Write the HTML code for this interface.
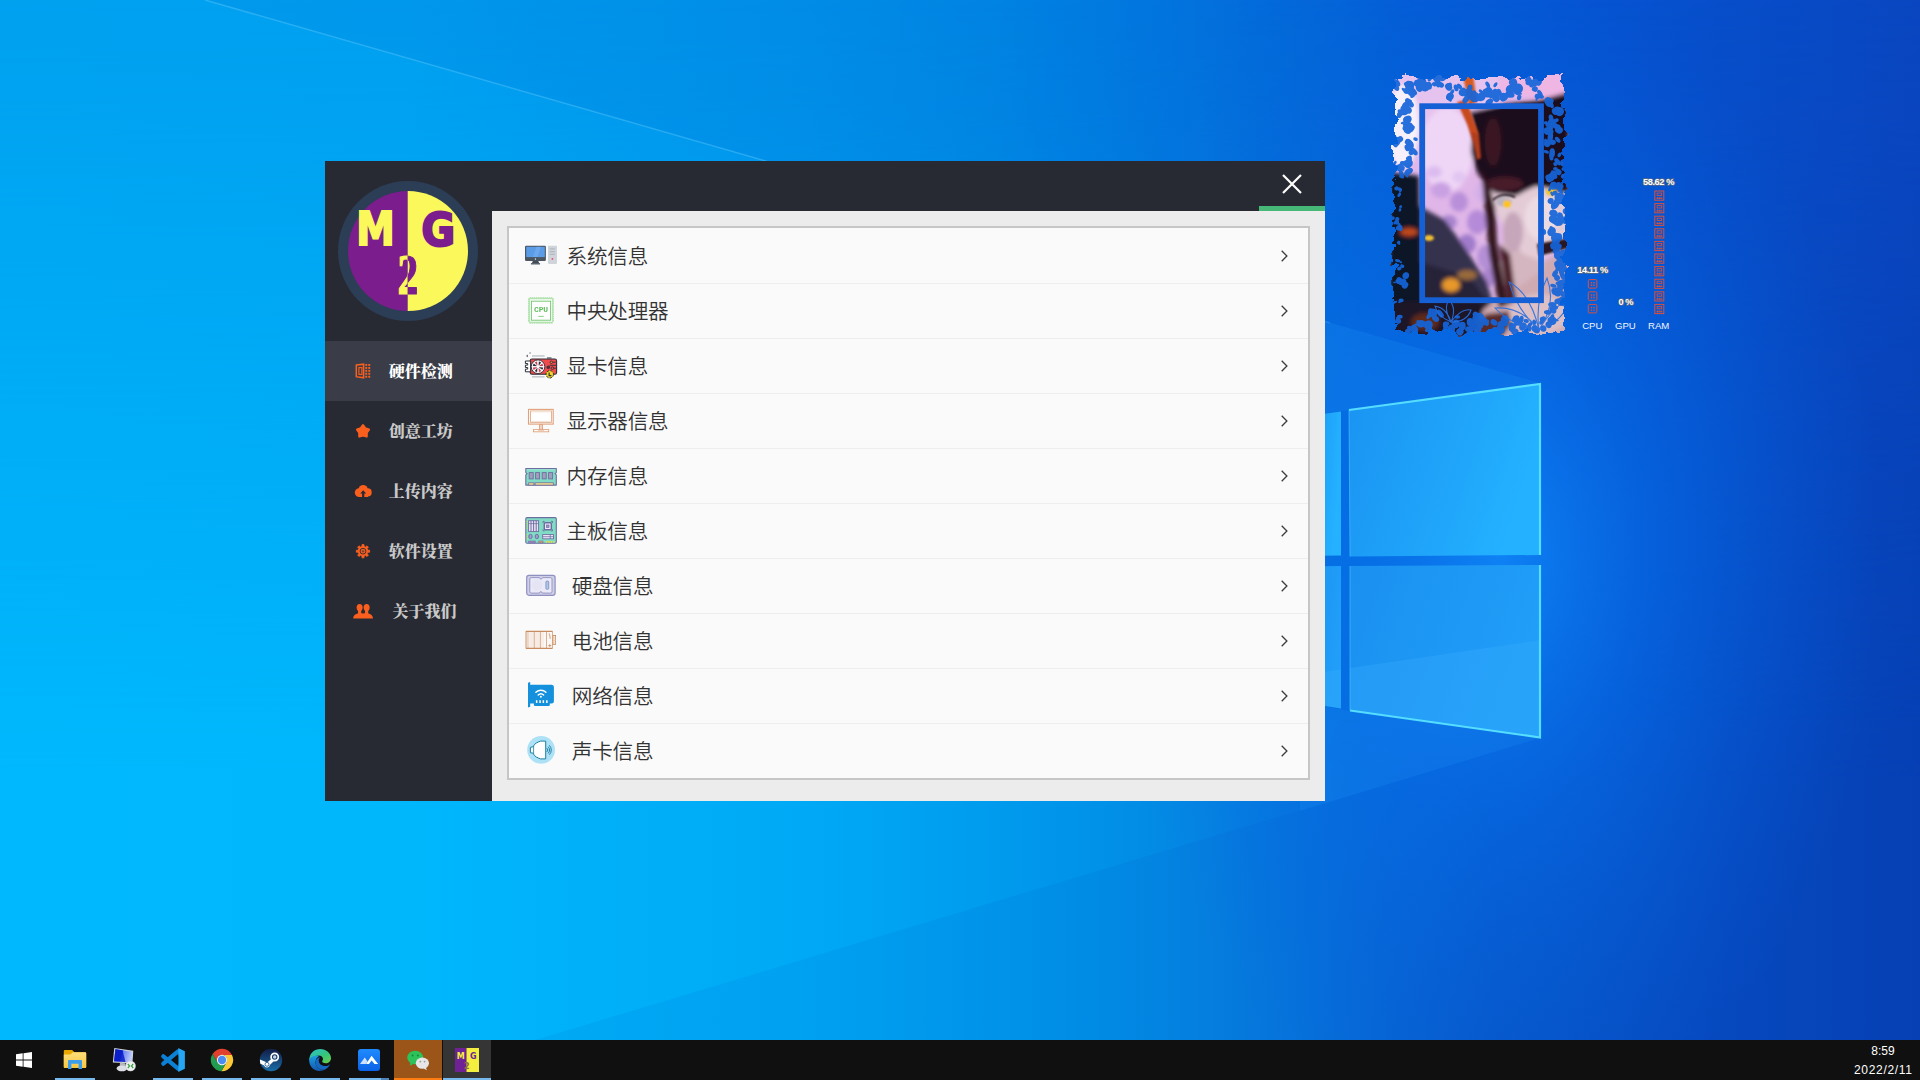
<!DOCTYPE html>
<html lang="zh-CN">
<head>
<meta charset="utf-8">
<title>MG2</title>
<style>
*{box-sizing:border-box;margin:0;padding:0}
html,body{width:1920px;height:1080px;overflow:hidden;background:#0078d7;font-family:"Liberation Sans","Noto Sans CJK SC",sans-serif}
#desk{position:absolute;left:0;top:0;width:1920px;height:1080px;overflow:hidden}
#wall{position:absolute;left:0;top:0;width:1920px;height:1040px}
/* app window */
#win{position:absolute;left:325px;top:161px;width:1000px;height:640px;background:#282a33}
#side{position:absolute;left:0;top:0;width:167px;height:640px;background:#282a33}
#logo{position:absolute;left:13px;top:20px;width:140px;height:140px}
.nav{position:absolute;left:0;width:167px;height:60px;color:#c9c9c9;font-family:"Liberation Serif","Noto Serif CJK SC",serif;font-weight:900;font-size:16px;line-height:61.6px}
.nav.on{background:#3a3d48;color:#fff}
.nav svg{position:absolute;left:26px;top:18px;width:24px;height:24px}
.nav span{position:absolute;left:63.7px;top:0;white-space:nowrap;letter-spacing:0}
#tbar{position:absolute;left:167px;top:0;width:833px;height:50px;background:#282a33}
#gbar{position:absolute;left:934px;top:45px;width:66px;height:5px;background:#47b877}
#close{position:absolute;left:956px;top:12px;width:22px;height:22px}
#main{position:absolute;left:167px;top:50px;width:833px;height:590px;background:#ececec}
#list{position:absolute;left:15px;top:15px;width:803px;height:554px;border:2px solid #c6c6c6;background:#fafafa;padding-top:1px;overflow:hidden}
.row{position:relative;height:55px;border-bottom:1px solid #eeeeee;font-size:20.6px;letter-spacing:-0.2px;line-height:55px;color:#333}
.row:last-child{border-bottom:none}
.row .ic{position:absolute;left:10px;top:7px;width:40px;height:40px}
.row .tx{position:absolute;left:57.5px;top:0px;white-space:nowrap;font-weight:350}
.row.w .tx{left:62.8px}
.row .ch{position:absolute;left:770px;top:18.7px;width:10px;height:16px}
/* taskbar */
#task{position:absolute;left:0;top:1040px;width:1920px;height:40px;background:#101010}
.tb{position:absolute;top:0;width:48px;height:40px}
.tb .ul{position:absolute;left:4px;right:4px;bottom:0;height:2px;background:#76b9ed;display:block}
.tb svg{position:absolute;left:12px;top:8px;width:24px;height:24px}
#clock{position:absolute;left:1843px;width:80px;top:2px;color:#fff;font-size:12px;line-height:19px;text-align:center}
</style>
</head>
<body>
<div id="desk">
<svg id="wall" viewBox="0 0 1920 1040" preserveAspectRatio="none">
<defs>
<linearGradient id="bgT" x1="0" y1="0" x2="1920" y2="0" gradientUnits="userSpaceOnUse">
<stop offset="0" stop-color="#00a2f0"/><stop offset="0.21" stop-color="#00a0f0"/><stop offset="0.42" stop-color="#0093eb"/><stop offset="0.52" stop-color="#0089e6"/><stop offset="0.625" stop-color="#0376e0"/><stop offset="0.73" stop-color="#0560d8"/><stop offset="0.83" stop-color="#0654d2"/><stop offset="0.92" stop-color="#084cc8"/><stop offset="1" stop-color="#0a46c0"/>
</linearGradient>
<linearGradient id="bgB" x1="0" y1="0" x2="1920" y2="0" gradientUnits="userSpaceOnUse">
<stop offset="0" stop-color="#00b8fd"/><stop offset="0.21" stop-color="#00b7fc"/><stop offset="0.42" stop-color="#00a9f5"/><stop offset="0.5" stop-color="#009eef"/><stop offset="0.57" stop-color="#0092e9"/><stop offset="0.63" stop-color="#0584e2"/><stop offset="0.68" stop-color="#0674dc"/><stop offset="0.73" stop-color="#0764d3"/><stop offset="0.78" stop-color="#0757c9"/><stop offset="0.9" stop-color="#0648be"/><stop offset="1" stop-color="#0640b4"/>
</linearGradient>
<linearGradient id="vm" x1="0" y1="0" x2="0" y2="1040" gradientUnits="userSpaceOnUse">
<stop offset="0" stop-color="#000"/><stop offset="0.1" stop-color="#161616"/><stop offset="0.75" stop-color="#fff"/><stop offset="1" stop-color="#fff"/>
</linearGradient>
<mask id="vmask"><rect width="1920" height="1040" fill="url(#vm)"/></mask>
<radialGradient id="glow" cx="1500" cy="560" r="380" gradientUnits="userSpaceOnUse" gradientTransform="translate(1500 560) scale(1 1.550) translate(-1500 -560)">
<stop offset="0" stop-color="#108cff" stop-opacity="0.8"/><stop offset="0.4" stop-color="#0672f0" stop-opacity="0.5"/><stop offset="1" stop-color="#0460e0" stop-opacity="0"/>
</radialGradient>
<linearGradient id="fadeR" x1="0" y1="0" x2="1920" y2="0" gradientUnits="userSpaceOnUse">
<stop offset="0" stop-color="#0030b0" stop-opacity="0.070"/><stop offset="0.65" stop-color="#0030b0" stop-opacity="0.070"/><stop offset="0.8" stop-color="#0030b0" stop-opacity="0"/><stop offset="1" stop-color="#0030b0" stop-opacity="0"/>
</linearGradient>
<linearGradient id="pane1" x1="0" y1="0" x2="1" y2="0.300"><stop offset="0" stop-color="#1a93f2"/><stop offset="0.700" stop-color="#20a7fb"/><stop offset="1" stop-color="#24b1ff"/></linearGradient>
<linearGradient id="pane2" x1="0" y1="0" x2="1" y2="0.300"><stop offset="0" stop-color="#1a90f0"/><stop offset="1" stop-color="#209ef8"/></linearGradient>
</defs>
<rect width="1920" height="1040" fill="url(#bgT)"/>
<rect width="1920" height="1040" fill="url(#bgB)" mask="url(#vmask)"/>
<!-- darker region above the upper beam edge -->
<polygon points="205,0 1920,0 1920,383 1540,383" fill="url(#fadeR)"/>
<line x1="205" y1="0" x2="1330" y2="323" stroke="#6fd0ff" stroke-width="1.5" opacity="0.35"/>
<!-- darker under lower beam edge -->
<polygon points="1540,738 535,1040 1920,1040 1920,738" fill="url(#fadeR)"/>
<rect width="1920" height="1040" fill="url(#glow)"/>
<!-- beam near window -->
<polygon points="1540,383 1300,314 1300,417 1349,410" fill="#1a8af0" opacity="0.280"/>
<polygon points="1540,738 1300,811 1300,702 1350,711" fill="#1a8af0" opacity="0.280"/>
<!-- panes -->
<polygon points="1349,410 1540.5,383.5 1540.5,555 1350,556.5" fill="url(#pane1)"/>
<polygon points="1350,566 1540.5,565 1540.5,738 1350,710.5" fill="url(#pane2)"/>
<polygon points="1300,417 1341,411.5 1341,555.5 1300,556" fill="url(#pane1)"/>
<polygon points="1300,566.5 1341,566 1341,708.5 1300,702" fill="url(#pane2)"/>
<polygon points="1350,668 1540.5,640 1540.5,738 1350,710.5" fill="#3aaeff" opacity="0.30"/><polygon points="1300,675 1341,669.500 1341,708.500 1300,702" fill="#3aaeff" opacity="0.30"/>
<polyline points="1349,410 1540,384 1540,555" fill="none" stroke="#58e2ff" stroke-width="2.200" opacity="0.950"/>
<polyline points="1540,565 1540,737.500 1350,710.500" fill="none" stroke="#58e2ff" stroke-width="2.200" opacity="0.950"/>
<polyline points="1350,556.5 1349,410" fill="none" stroke="#4fc8ff" stroke-width="1" opacity="0.6"/>
<polyline points="1350,710.5 1350,566" fill="none" stroke="#4fc8ff" stroke-width="1" opacity="0.6"/>
</svg>

<!--WIDGET-->
<svg id="wid" viewBox="0 0 180 266" style="position:absolute;left:1389px;top:72px;width:180px;height:266px;overflow:visible">
<defs>
<filter id="wb2" x="-5%" y="-5%" width="110%" height="110%"><feGaussianBlur stdDeviation="2"/></filter>
<filter id="wb4" x="-10%" y="-10%" width="120%" height="120%"><feGaussianBlur stdDeviation="4"/></filter>
<filter id="wb1" x="-5%" y="-5%" width="110%" height="110%"><feGaussianBlur stdDeviation="0.8"/></filter>
<filter id="torn" x="-10%" y="-10%" width="120%" height="120%"><feTurbulence type="fractalNoise" baseFrequency="0.09" numOctaves="3" seed="4" result="n"/><feDisplacementMap in="SourceGraphic" in2="n" scale="16" xChannelSelector="R" yChannelSelector="G"/></filter>
<mask id="tmask"><rect x="0" y="0" width="180" height="266" fill="#000"/><rect x="5" y="6" width="170" height="254" fill="#fff" filter="url(#torn)"/></mask>
<clipPath id="wclip"><rect x="0" y="0" width="180" height="266"/></clipPath>
</defs>
<g clip-path="url(#wclip)"><g mask="url(#tmask)">
<rect x="0" y="0" width="180" height="266" fill="#e0b6e8"/>
<g filter="url(#wb2)"><rect x="0" y="0" width="110" height="60" fill="#e6c2ee"/><ellipse cx="58" cy="78" rx="26" ry="42" fill="#efd6f6"/><ellipse cx="14" cy="55" rx="16" ry="42" fill="#f6f0fa"/><ellipse cx="150" cy="12" rx="40" ry="14" fill="#efb6e4"/><ellipse cx="52" cy="118" rx="10" ry="8" fill="#c9a0e2"/><ellipse cx="70" cy="130" rx="9" ry="10" fill="#b98fda"/><ellipse cx="88" cy="150" rx="10" ry="12" fill="#b58ad8"/><ellipse cx="60" cy="150" rx="8" ry="7" fill="#a884cf"/><ellipse cx="78" cy="172" rx="9" ry="10" fill="#a07ccb"/><ellipse cx="96" cy="185" rx="8" ry="12" fill="#b48fd6"/><ellipse cx="100" cy="205" rx="7" ry="10" fill="#a984cd"/><ellipse cx="45" cy="100" rx="8" ry="6" fill="#dcbcf0"/><ellipse cx="92" cy="120" rx="6" ry="10" fill="#d4b0ea"/><ellipse cx="70" cy="105" rx="7" ry="6" fill="#e2c6f2"/><polygon points="30,134 56,148 76,176 98,210 104,232 30,232" fill="#34304e"/><polygon points="30,190 80,205 100,232 30,232" fill="#262238"/><polygon points="0,100 30,104 32,266 0,266" fill="#0b1228"/><polygon points="0,228 104,232 92,266 0,266" fill="#1a1426"/><ellipse cx="62" cy="213" rx="9" ry="7" fill="#e8982c"/><ellipse cx="78" cy="203" rx="10" ry="5" fill="#9a6a3a"/><ellipse cx="20" cy="160" rx="9" ry="4" fill="#c2481a"/><ellipse cx="36" cy="250" rx="14" ry="9" fill="#5e2a1e"/><polygon points="86,266 94,238 120,216 150,192 180,176 180,266" fill="#cfaab2"/><polygon points="82,266 96,242 132,238 112,266" fill="#5a2c2c"/><ellipse cx="150" cy="242" rx="30" ry="20" fill="#dcc0c6"/><polygon points="116,158 150,184 156,196 122,220 110,205" fill="#d4b6c0"/><polygon points="100,116 106,121 127,124 138,118 147,114 158,116 175,121 180,122 180,172 166,178 150,188 134,182 120,162 108,142" fill="#e4ccd6"/><ellipse cx="152" cy="146" rx="16" ry="22" fill="#eddbe3"/><ellipse cx="124" cy="160" rx="10" ry="20" fill="#c6a6ba"/><polygon points="80,40 98,36 116,32 150,28 180,20 180,122 170,120 158,116 147,114 138,118 127,124 106,121 96,113 88,100 82,80 84,58" fill="#1b0e1e"/><polygon points="92,96 100,112 106,135 108,172 119,232 110,236 100,182 96,140" fill="#30121e"/><polygon points="110,172 119,232 127,228 121,182" fill="#4a1a26"/><ellipse cx="116" cy="112" rx="18" ry="7" fill="#4a1c2a"/><ellipse cx="104" cy="70" rx="8" ry="24" fill="#3a1622"/></g>
<g filter="url(#wb1)">
<polygon points="68,30 77,28 90,62 84,70 78,52" fill="#c8481e"/>
<polygon points="74,4 84,2 88,30 80,34" fill="#d65a22"/>
<polygon points="82,60 90,62 92,86 88,88" fill="#b03c1c"/>
<ellipse cx="115" cy="130" rx="8" ry="4.500" fill="#b9b4c0"/>
<ellipse cx="118" cy="132" rx="4" ry="3.400" fill="#ffc31c"/>
<path d="M104 128q10-8 22-3" stroke="#1a0c16" stroke-width="2" fill="none"/>
<ellipse cx="162" cy="120" rx="5" ry="3.400" fill="#f2c420"/>
<path d="M150 113q8-6 18-3" stroke="#1a0c16" stroke-width="1.600" fill="none"/>
<polygon points="148,172 180,166 180,176 150,184" fill="#2a1820"/>
<ellipse cx="40" cy="166" rx="5" ry="3" fill="#f0c030"/>
</g>
<g fill="#1565da" opacity="0.92"><ellipse cx="6.2" cy="10.2" rx="3.9" ry="2.7" transform="rotate(14 6.6 10.7)"/><ellipse cx="8.2" cy="9.7" rx="2.5" ry="1.8" transform="rotate(61 6.6 10.7)"/><ellipse cx="9.8" cy="12.8" rx="4.9" ry="2.7" transform="rotate(57 6.6 10.7)"/><ellipse cx="3.0" cy="6.9" rx="2.4" ry="1.9" transform="rotate(12 6.6 10.7)"/><ellipse cx="7.0" cy="10.7" rx="5.0" ry="3.2" transform="rotate(36 6.6 10.7)"/><ellipse cx="13.6" cy="16.0" rx="2.6" ry="2.0" transform="rotate(48 19.3 18.3)"/><ellipse cx="15.9" cy="21.8" rx="2.4" ry="1.3" transform="rotate(52 19.3 18.3)"/><ellipse cx="14.5" cy="18.4" rx="4.7" ry="3.4" transform="rotate(116 19.3 18.3)"/><ellipse cx="17.9" cy="20.0" rx="2.8" ry="2.5" transform="rotate(20 19.3 18.3)"/><ellipse cx="15.1" cy="16.1" rx="5.0" ry="4.3" transform="rotate(73 19.3 18.3)"/><ellipse cx="29.4" cy="9.2" rx="3.3" ry="3.2" transform="rotate(107 30.9 9.3)"/><ellipse cx="36.7" cy="10.8" rx="4.7" ry="3.7" transform="rotate(80 30.9 9.3)"/><ellipse cx="29.2" cy="12.0" rx="3.8" ry="3.4" transform="rotate(17 30.9 9.3)"/><ellipse cx="35.4" cy="2.1" rx="3.7" ry="3.1" transform="rotate(15 30.9 9.3)"/><ellipse cx="30.5" cy="6.6" rx="4.1" ry="3.4" transform="rotate(114 30.9 9.3)"/><ellipse cx="39.2" cy="14.8" rx="3.7" ry="2.2" transform="rotate(29 39.3 14.9)"/><ellipse cx="37.3" cy="15.0" rx="3.2" ry="2.7" transform="rotate(101 39.3 14.9)"/><ellipse cx="33.2" cy="19.9" rx="2.5" ry="1.8" transform="rotate(140 39.3 14.9)"/><ellipse cx="39.1" cy="16.2" rx="3.6" ry="2.8" transform="rotate(180 39.3 14.9)"/><ellipse cx="36.5" cy="16.6" rx="5.0" ry="4.9" transform="rotate(38 39.3 14.9)"/><ellipse cx="48.6" cy="10.6" rx="4.9" ry="2.9" transform="rotate(72 48.7 10.7)"/><ellipse cx="52.4" cy="10.8" rx="3.4" ry="2.7" transform="rotate(32 48.7 10.7)"/><ellipse cx="47.0" cy="6.4" rx="4.2" ry="3.5" transform="rotate(13 48.7 10.7)"/><ellipse cx="41.1" cy="12.8" rx="5.2" ry="4.4" transform="rotate(143 48.7 10.7)"/><ellipse cx="45.9" cy="13.0" rx="2.6" ry="2.1" transform="rotate(15 48.7 10.7)"/><ellipse cx="59.6" cy="26.1" rx="4.1" ry="2.3" transform="rotate(145 60.5 25.7)"/><ellipse cx="61.1" cy="26.5" rx="3.4" ry="1.7" transform="rotate(53 60.5 25.7)"/><ellipse cx="59.5" cy="24.8" rx="3.0" ry="2.1" transform="rotate(93 60.5 25.7)"/><ellipse cx="59.5" cy="25.9" rx="3.8" ry="3.7" transform="rotate(122 60.5 25.7)"/><ellipse cx="59.8" cy="25.8" rx="2.6" ry="1.7" transform="rotate(67 60.5 25.7)"/><ellipse cx="72.0" cy="20.3" rx="5.2" ry="3.6" transform="rotate(176 73.8 20.5)"/><ellipse cx="73.6" cy="20.4" rx="3.9" ry="3.9" transform="rotate(23 73.8 20.5)"/><ellipse cx="73.0" cy="18.2" rx="3.4" ry="2.0" transform="rotate(57 73.8 20.5)"/><ellipse cx="67.0" cy="19.0" rx="3.3" ry="2.0" transform="rotate(49 73.8 20.5)"/><ellipse cx="76.4" cy="13.5" rx="4.6" ry="2.8" transform="rotate(132 73.8 20.5)"/><ellipse cx="92.0" cy="20.7" rx="3.7" ry="2.2" transform="rotate(154 84.9 21.2)"/><ellipse cx="88.8" cy="20.1" rx="5.2" ry="5.2" transform="rotate(93 84.9 21.2)"/><ellipse cx="85.7" cy="21.6" rx="3.7" ry="2.5" transform="rotate(123 84.9 21.2)"/><ellipse cx="79.2" cy="15.5" rx="4.9" ry="3.6" transform="rotate(167 84.9 21.2)"/><ellipse cx="81.7" cy="26.0" rx="4.9" ry="2.7" transform="rotate(99 84.9 21.2)"/><ellipse cx="96.7" cy="21.7" rx="4.7" ry="3.2" transform="rotate(101 98.3 21.5)"/><ellipse cx="91.7" cy="23.0" rx="2.5" ry="1.5" transform="rotate(32 98.3 21.5)"/><ellipse cx="103.5" cy="22.4" rx="3.7" ry="3.1" transform="rotate(156 98.3 21.5)"/><ellipse cx="102.3" cy="13.7" rx="4.3" ry="2.9" transform="rotate(140 98.3 21.5)"/><ellipse cx="98.1" cy="21.4" rx="4.8" ry="4.1" transform="rotate(26 98.3 21.5)"/><ellipse cx="100.0" cy="28.0" rx="4.9" ry="2.9" transform="rotate(64 107.2 24.8)"/><ellipse cx="108.3" cy="29.2" rx="4.7" ry="3.1" transform="rotate(139 107.2 24.8)"/><ellipse cx="106.2" cy="25.4" rx="5.1" ry="3.5" transform="rotate(117 107.2 24.8)"/><ellipse cx="103.4" cy="18.6" rx="3.9" ry="3.5" transform="rotate(128 107.2 24.8)"/><ellipse cx="108.1" cy="25.8" rx="3.9" ry="3.6" transform="rotate(46 107.2 24.8)"/><ellipse cx="119.6" cy="23.0" rx="4.2" ry="2.4" transform="rotate(15 118.9 22.0)"/><ellipse cx="116.7" cy="26.1" rx="4.0" ry="3.6" transform="rotate(27 118.9 22.0)"/><ellipse cx="119.2" cy="21.6" rx="2.9" ry="1.5" transform="rotate(25 118.9 22.0)"/><ellipse cx="113.8" cy="21.7" rx="4.6" ry="4.4" transform="rotate(113 118.9 22.0)"/><ellipse cx="114.9" cy="29.8" rx="4.2" ry="2.5" transform="rotate(70 118.9 22.0)"/><ellipse cx="120.2" cy="18.8" rx="4.5" ry="4.2" transform="rotate(66 128.6 17.6)"/><ellipse cx="135.7" cy="13.9" rx="2.9" ry="2.1" transform="rotate(106 128.6 17.6)"/><ellipse cx="131.5" cy="20.4" rx="2.5" ry="1.5" transform="rotate(18 128.6 17.6)"/><ellipse cx="129.3" cy="20.2" rx="2.6" ry="2.3" transform="rotate(164 128.6 17.6)"/><ellipse cx="127.9" cy="16.5" rx="5.0" ry="4.9" transform="rotate(56 128.6 17.6)"/><ellipse cx="143.1" cy="8.7" rx="4.4" ry="2.7" transform="rotate(180 142.0 9.7)"/><ellipse cx="137.8" cy="11.6" rx="3.3" ry="2.0" transform="rotate(81 142.0 9.7)"/><ellipse cx="144.7" cy="11.5" rx="3.3" ry="2.4" transform="rotate(180 142.0 9.7)"/><ellipse cx="144.9" cy="10.0" rx="4.2" ry="3.2" transform="rotate(16 142.0 9.7)"/><ellipse cx="148.2" cy="15.1" rx="3.0" ry="2.8" transform="rotate(21 142.0 9.7)"/><ellipse cx="149.6" cy="6.3" rx="2.7" ry="1.9" transform="rotate(173 149.1 8.7)"/><ellipse cx="150.1" cy="6.6" rx="2.7" ry="2.6" transform="rotate(146 149.1 8.7)"/><ellipse cx="146.2" cy="8.8" rx="3.1" ry="2.8" transform="rotate(46 149.1 8.7)"/><ellipse cx="148.5" cy="9.0" rx="5.2" ry="4.3" transform="rotate(66 149.1 8.7)"/><ellipse cx="155.8" cy="12.6" rx="2.5" ry="2.3" transform="rotate(116 149.1 8.7)"/><ellipse cx="150.9" cy="30.0" rx="4.2" ry="2.2" transform="rotate(61 158.1 25.9)"/><ellipse cx="166.2" cy="22.6" rx="3.1" ry="1.8" transform="rotate(79 158.1 25.9)"/><ellipse cx="154.8" cy="22.4" rx="2.9" ry="2.1" transform="rotate(172 158.1 25.9)"/><ellipse cx="159.5" cy="28.7" rx="2.3" ry="1.4" transform="rotate(3 158.1 25.9)"/><ellipse cx="162.6" cy="26.4" rx="5.3" ry="4.0" transform="rotate(62 158.1 25.9)"/><ellipse cx="178.1" cy="6.4" rx="3.8" ry="3.5" transform="rotate(100 176.5 9.9)"/><ellipse cx="179.2" cy="9.4" rx="2.9" ry="1.8" transform="rotate(50 176.5 9.9)"/><ellipse cx="179.6" cy="4.4" rx="4.3" ry="3.0" transform="rotate(88 176.5 9.9)"/><ellipse cx="184.0" cy="9.1" rx="2.3" ry="1.9" transform="rotate(65 176.5 9.9)"/><ellipse cx="176.0" cy="10.1" rx="4.3" ry="3.0" transform="rotate(129 176.5 9.9)"/><ellipse cx="19.7" cy="31.9" rx="2.8" ry="2.1" transform="rotate(40 20.1 30.0)"/><ellipse cx="20.1" cy="30.0" rx="3.0" ry="2.0" transform="rotate(140 20.1 30.0)"/><ellipse cx="19.9" cy="30.2" rx="4.5" ry="2.7" transform="rotate(46 20.1 30.0)"/><ellipse cx="23.1" cy="30.0" rx="3.3" ry="2.5" transform="rotate(51 20.1 30.0)"/><ellipse cx="20.1" cy="36.2" rx="2.3" ry="2.0" transform="rotate(36 20.1 30.0)"/><ellipse cx="15.4" cy="39.0" rx="2.9" ry="1.8" transform="rotate(149 15.2 39.0)"/><ellipse cx="21.8" cy="37.2" rx="2.4" ry="2.3" transform="rotate(152 15.2 39.0)"/><ellipse cx="13.2" cy="40.7" rx="4.8" ry="2.7" transform="rotate(158 15.2 39.0)"/><ellipse cx="15.0" cy="38.7" rx="4.3" ry="4.1" transform="rotate(160 15.2 39.0)"/><ellipse cx="10.1" cy="41.4" rx="3.4" ry="3.3" transform="rotate(129 15.2 39.0)"/><ellipse cx="18.3" cy="47.9" rx="3.9" ry="3.5" transform="rotate(174 18.2 48.0)"/><ellipse cx="23.2" cy="46.6" rx="2.2" ry="1.2" transform="rotate(163 18.2 48.0)"/><ellipse cx="17.7" cy="48.6" rx="4.3" ry="3.4" transform="rotate(160 18.2 48.0)"/><ellipse cx="22.5" cy="48.5" rx="2.7" ry="1.7" transform="rotate(116 18.2 48.0)"/><ellipse cx="20.0" cy="42.3" rx="3.4" ry="2.6" transform="rotate(168 18.2 48.0)"/><ellipse cx="17.4" cy="53.2" rx="4.3" ry="3.9" transform="rotate(60 17.5 57.0)"/><ellipse cx="17.3" cy="55.4" rx="4.1" ry="4.0" transform="rotate(126 17.5 57.0)"/><ellipse cx="17.8" cy="56.5" rx="4.5" ry="2.9" transform="rotate(11 17.5 57.0)"/><ellipse cx="13.7" cy="53.6" rx="2.2" ry="1.3" transform="rotate(65 17.5 57.0)"/><ellipse cx="14.3" cy="52.5" rx="3.7" ry="2.1" transform="rotate(123 17.5 57.0)"/><ellipse cx="8.5" cy="71.3" rx="3.9" ry="3.3" transform="rotate(74 9.1 66.0)"/><ellipse cx="8.5" cy="63.8" rx="3.3" ry="2.9" transform="rotate(140 9.1 66.0)"/><ellipse cx="11.5" cy="73.4" rx="4.6" ry="2.4" transform="rotate(117 9.1 66.0)"/><ellipse cx="12.7" cy="67.9" rx="4.8" ry="4.8" transform="rotate(99 9.1 66.0)"/><ellipse cx="11.0" cy="73.3" rx="2.6" ry="2.0" transform="rotate(36 9.1 66.0)"/><ellipse cx="21.2" cy="77.9" rx="3.7" ry="3.0" transform="rotate(71 21.5 75.0)"/><ellipse cx="25.7" cy="71.3" rx="2.6" ry="2.5" transform="rotate(124 21.5 75.0)"/><ellipse cx="20.5" cy="75.8" rx="4.7" ry="3.9" transform="rotate(103 21.5 75.0)"/><ellipse cx="21.1" cy="76.1" rx="3.0" ry="1.9" transform="rotate(84 21.5 75.0)"/><ellipse cx="27.5" cy="75.1" rx="4.3" ry="2.4" transform="rotate(50 21.5 75.0)"/><ellipse cx="22.7" cy="82.7" rx="3.0" ry="2.1" transform="rotate(150 20.8 84.0)"/><ellipse cx="27.4" cy="87.4" rx="4.1" ry="3.8" transform="rotate(71 20.8 84.0)"/><ellipse cx="26.2" cy="88.0" rx="2.8" ry="2.7" transform="rotate(63 20.8 84.0)"/><ellipse cx="24.3" cy="83.4" rx="2.9" ry="2.6" transform="rotate(109 20.8 84.0)"/><ellipse cx="25.7" cy="79.7" rx="3.8" ry="3.6" transform="rotate(141 20.8 84.0)"/><ellipse cx="17.8" cy="92.6" rx="4.1" ry="2.9" transform="rotate(35 17.9 93.0)"/><ellipse cx="16.5" cy="91.2" rx="2.1" ry="2.1" transform="rotate(32 17.9 93.0)"/><ellipse cx="19.5" cy="95.9" rx="2.8" ry="1.8" transform="rotate(167 17.9 93.0)"/><ellipse cx="17.6" cy="98.2" rx="2.8" ry="2.2" transform="rotate(100 17.9 93.0)"/><ellipse cx="21.6" cy="96.5" rx="2.2" ry="1.7" transform="rotate(127 17.9 93.0)"/><ellipse cx="15.4" cy="102.8" rx="4.1" ry="2.9" transform="rotate(140 17.9 102.0)"/><ellipse cx="18.2" cy="102.7" rx="3.0" ry="1.6" transform="rotate(61 17.9 102.0)"/><ellipse cx="13.5" cy="106.8" rx="2.6" ry="1.3" transform="rotate(105 17.9 102.0)"/><ellipse cx="13.5" cy="106.0" rx="2.6" ry="1.6" transform="rotate(15 17.9 102.0)"/><ellipse cx="13.3" cy="102.1" rx="3.0" ry="2.5" transform="rotate(135 17.9 102.0)"/><ellipse cx="171.2" cy="38.7" rx="2.8" ry="1.7" transform="rotate(102 170.1 40.0)"/><ellipse cx="168.0" cy="37.3" rx="2.9" ry="2.6" transform="rotate(5 170.1 40.0)"/><ellipse cx="172.4" cy="42.4" rx="4.1" ry="3.7" transform="rotate(150 170.1 40.0)"/><ellipse cx="169.5" cy="40.0" rx="4.6" ry="4.4" transform="rotate(135 170.1 40.0)"/><ellipse cx="174.9" cy="33.9" rx="2.7" ry="1.5" transform="rotate(39 170.1 40.0)"/><ellipse cx="163.3" cy="49.8" rx="4.3" ry="3.7" transform="rotate(117 162.4 50.0)"/><ellipse cx="167.8" cy="53.2" rx="2.0" ry="1.1" transform="rotate(145 162.4 50.0)"/><ellipse cx="167.0" cy="47.5" rx="2.9" ry="1.6" transform="rotate(64 162.4 50.0)"/><ellipse cx="159.0" cy="49.4" rx="4.1" ry="2.3" transform="rotate(76 162.4 50.0)"/><ellipse cx="157.8" cy="49.3" rx="3.1" ry="1.9" transform="rotate(153 162.4 50.0)"/><ellipse cx="152.3" cy="58.1" rx="2.8" ry="1.8" transform="rotate(62 160.0 60.0)"/><ellipse cx="158.2" cy="60.3" rx="2.7" ry="2.6" transform="rotate(180 160.0 60.0)"/><ellipse cx="159.8" cy="59.6" rx="2.5" ry="2.4" transform="rotate(165 160.0 60.0)"/><ellipse cx="158.2" cy="61.0" rx="3.9" ry="3.7" transform="rotate(58 160.0 60.0)"/><ellipse cx="154.5" cy="60.2" rx="4.0" ry="2.7" transform="rotate(101 160.0 60.0)"/><ellipse cx="164.9" cy="64.3" rx="3.4" ry="2.1" transform="rotate(51 163.2 70.0)"/><ellipse cx="160.7" cy="76.1" rx="2.6" ry="1.6" transform="rotate(75 163.2 70.0)"/><ellipse cx="167.0" cy="73.2" rx="3.7" ry="3.5" transform="rotate(124 163.2 70.0)"/><ellipse cx="158.6" cy="72.7" rx="4.7" ry="2.7" transform="rotate(100 163.2 70.0)"/><ellipse cx="163.3" cy="70.1" rx="3.7" ry="2.6" transform="rotate(15 163.2 70.0)"/><ellipse cx="157.5" cy="81.8" rx="2.9" ry="1.6" transform="rotate(20 162.9 80.0)"/><ellipse cx="165.3" cy="78.9" rx="2.5" ry="2.4" transform="rotate(119 162.9 80.0)"/><ellipse cx="168.2" cy="81.1" rx="3.1" ry="2.1" transform="rotate(84 162.9 80.0)"/><ellipse cx="162.1" cy="80.3" rx="2.2" ry="1.2" transform="rotate(107 162.9 80.0)"/><ellipse cx="163.9" cy="79.7" rx="4.7" ry="2.8" transform="rotate(91 162.9 80.0)"/><ellipse cx="170.0" cy="96.0" rx="2.2" ry="1.9" transform="rotate(50 172.3 90.0)"/><ellipse cx="167.2" cy="95.3" rx="2.5" ry="1.7" transform="rotate(121 172.3 90.0)"/><ellipse cx="175.5" cy="90.6" rx="4.3" ry="3.8" transform="rotate(10 172.3 90.0)"/><ellipse cx="169.7" cy="92.6" rx="4.2" ry="2.3" transform="rotate(49 172.3 90.0)"/><ellipse cx="172.2" cy="82.8" rx="2.9" ry="1.9" transform="rotate(157 172.3 90.0)"/><ellipse cx="160.6" cy="94.5" rx="4.6" ry="3.0" transform="rotate(152 160.7 100.0)"/><ellipse cx="165.1" cy="97.5" rx="4.6" ry="2.4" transform="rotate(59 160.7 100.0)"/><ellipse cx="165.2" cy="103.6" rx="3.3" ry="2.9" transform="rotate(64 160.7 100.0)"/><ellipse cx="166.3" cy="96.6" rx="2.4" ry="1.8" transform="rotate(2 160.7 100.0)"/><ellipse cx="162.6" cy="94.4" rx="4.3" ry="3.8" transform="rotate(155 160.7 100.0)"/><ellipse cx="166.2" cy="107.2" rx="4.2" ry="3.3" transform="rotate(131 163.8 110.0)"/><ellipse cx="165.7" cy="115.7" rx="2.7" ry="1.4" transform="rotate(8 163.8 110.0)"/><ellipse cx="159.5" cy="110.5" rx="2.4" ry="1.7" transform="rotate(26 163.8 110.0)"/><ellipse cx="165.9" cy="109.8" rx="2.2" ry="1.2" transform="rotate(127 163.8 110.0)"/><ellipse cx="171.5" cy="109.4" rx="2.5" ry="1.4" transform="rotate(117 163.8 110.0)"/><ellipse cx="167.2" cy="114.7" rx="4.4" ry="3.6" transform="rotate(31 169.9 120.0)"/><ellipse cx="170.4" cy="117.7" rx="2.8" ry="1.8" transform="rotate(65 169.9 120.0)"/><ellipse cx="169.8" cy="118.4" rx="2.7" ry="1.7" transform="rotate(39 169.9 120.0)"/><ellipse cx="168.5" cy="127.1" rx="2.5" ry="1.3" transform="rotate(64 169.9 120.0)"/><ellipse cx="174.0" cy="119.8" rx="2.6" ry="2.4" transform="rotate(167 169.9 120.0)"/><ellipse cx="167.5" cy="130.0" rx="4.5" ry="2.8" transform="rotate(114 167.4 130.0)"/><ellipse cx="167.7" cy="129.8" rx="2.8" ry="1.6" transform="rotate(48 167.4 130.0)"/><ellipse cx="162.1" cy="126.1" rx="2.5" ry="1.4" transform="rotate(131 167.4 130.0)"/><ellipse cx="169.8" cy="127.3" rx="2.7" ry="2.4" transform="rotate(1 167.4 130.0)"/><ellipse cx="171.2" cy="132.9" rx="3.7" ry="2.3" transform="rotate(94 167.4 130.0)"/><ellipse cx="173.1" cy="142.2" rx="2.1" ry="1.8" transform="rotate(52 165.4 140.0)"/><ellipse cx="168.0" cy="134.0" rx="3.1" ry="2.2" transform="rotate(158 165.4 140.0)"/><ellipse cx="164.8" cy="141.5" rx="4.2" ry="3.3" transform="rotate(16 165.4 140.0)"/><ellipse cx="160.1" cy="143.5" rx="3.9" ry="2.2" transform="rotate(136 165.4 140.0)"/><ellipse cx="166.5" cy="140.7" rx="3.9" ry="2.8" transform="rotate(72 165.4 140.0)"/><ellipse cx="170.3" cy="150.2" rx="4.1" ry="3.8" transform="rotate(106 170.7 150.0)"/><ellipse cx="164.7" cy="153.5" rx="4.8" ry="3.3" transform="rotate(50 170.7 150.0)"/><ellipse cx="168.2" cy="152.1" rx="4.6" ry="3.3" transform="rotate(40 170.7 150.0)"/><ellipse cx="164.9" cy="153.0" rx="3.1" ry="3.0" transform="rotate(117 170.7 150.0)"/><ellipse cx="170.8" cy="149.0" rx="2.1" ry="1.2" transform="rotate(101 170.7 150.0)"/><ellipse cx="159.3" cy="157.9" rx="3.4" ry="2.0" transform="rotate(72 161.4 160.0)"/><ellipse cx="162.1" cy="161.2" rx="2.2" ry="1.5" transform="rotate(50 161.4 160.0)"/><ellipse cx="159.3" cy="166.3" rx="2.1" ry="2.0" transform="rotate(80 161.4 160.0)"/><ellipse cx="168.4" cy="162.4" rx="3.1" ry="2.9" transform="rotate(158 161.4 160.0)"/><ellipse cx="158.7" cy="153.4" rx="3.8" ry="3.5" transform="rotate(158 161.4 160.0)"/><ellipse cx="170.2" cy="164.5" rx="2.5" ry="1.5" transform="rotate(102 166.5 170.0)"/><ellipse cx="167.6" cy="169.5" rx="3.0" ry="1.7" transform="rotate(49 166.5 170.0)"/><ellipse cx="170.8" cy="171.1" rx="4.1" ry="2.1" transform="rotate(82 166.5 170.0)"/><ellipse cx="170.0" cy="173.2" rx="3.5" ry="2.9" transform="rotate(78 166.5 170.0)"/><ellipse cx="165.0" cy="168.0" rx="2.7" ry="1.9" transform="rotate(94 166.5 170.0)"/><ellipse cx="167.0" cy="180.1" rx="3.7" ry="2.8" transform="rotate(60 167.1 180.0)"/><ellipse cx="162.5" cy="181.6" rx="4.3" ry="3.9" transform="rotate(121 167.1 180.0)"/><ellipse cx="166.7" cy="180.3" rx="3.0" ry="2.1" transform="rotate(113 167.1 180.0)"/><ellipse cx="161.9" cy="179.9" rx="2.1" ry="1.2" transform="rotate(80 167.1 180.0)"/><ellipse cx="167.9" cy="176.0" rx="2.2" ry="1.6" transform="rotate(96 167.1 180.0)"/><ellipse cx="170.5" cy="189.8" rx="2.2" ry="1.8" transform="rotate(177 170.4 190.0)"/><ellipse cx="171.1" cy="188.6" rx="4.7" ry="3.5" transform="rotate(42 170.4 190.0)"/><ellipse cx="168.2" cy="184.7" rx="2.6" ry="2.4" transform="rotate(156 170.4 190.0)"/><ellipse cx="170.5" cy="188.7" rx="4.5" ry="2.9" transform="rotate(116 170.4 190.0)"/><ellipse cx="172.9" cy="193.2" rx="4.6" ry="2.8" transform="rotate(67 170.4 190.0)"/><ellipse cx="170.1" cy="203.0" rx="2.6" ry="1.8" transform="rotate(162 169.9 200.0)"/><ellipse cx="174.9" cy="197.9" rx="4.5" ry="2.6" transform="rotate(67 169.9 200.0)"/><ellipse cx="173.0" cy="202.8" rx="3.8" ry="2.6" transform="rotate(115 169.9 200.0)"/><ellipse cx="165.5" cy="198.4" rx="4.5" ry="2.5" transform="rotate(137 169.9 200.0)"/><ellipse cx="167.7" cy="197.7" rx="4.2" ry="2.7" transform="rotate(94 169.9 200.0)"/><ellipse cx="165.3" cy="214.7" rx="3.2" ry="1.9" transform="rotate(12 169.2 210.0)"/><ellipse cx="168.1" cy="214.0" rx="2.9" ry="2.8" transform="rotate(149 169.2 210.0)"/><ellipse cx="175.7" cy="206.9" rx="4.1" ry="3.5" transform="rotate(56 169.2 210.0)"/><ellipse cx="172.2" cy="214.0" rx="3.2" ry="2.4" transform="rotate(12 169.2 210.0)"/><ellipse cx="170.5" cy="211.3" rx="3.8" ry="2.0" transform="rotate(0 169.2 210.0)"/><ellipse cx="167.7" cy="223.9" rx="3.5" ry="2.5" transform="rotate(77 169.1 220.0)"/><ellipse cx="167.7" cy="219.1" rx="3.7" ry="2.8" transform="rotate(34 169.1 220.0)"/><ellipse cx="175.5" cy="220.6" rx="4.0" ry="2.9" transform="rotate(16 169.1 220.0)"/><ellipse cx="164.6" cy="214.7" rx="4.2" ry="2.9" transform="rotate(67 169.1 220.0)"/><ellipse cx="169.5" cy="219.9" rx="4.3" ry="4.1" transform="rotate(152 169.1 220.0)"/><ellipse cx="163.3" cy="232.6" rx="4.1" ry="2.5" transform="rotate(0 170.3 230.0)"/><ellipse cx="174.4" cy="231.2" rx="3.1" ry="1.9" transform="rotate(14 170.3 230.0)"/><ellipse cx="171.0" cy="229.6" rx="3.7" ry="3.1" transform="rotate(50 170.3 230.0)"/><ellipse cx="171.3" cy="231.2" rx="3.7" ry="2.8" transform="rotate(164 170.3 230.0)"/><ellipse cx="166.1" cy="232.5" rx="3.4" ry="1.8" transform="rotate(160 170.3 230.0)"/><ellipse cx="165.6" cy="236.0" rx="4.0" ry="2.0" transform="rotate(111 160.8 240.0)"/><ellipse cx="160.7" cy="236.3" rx="4.1" ry="3.0" transform="rotate(57 160.8 240.0)"/><ellipse cx="162.9" cy="240.0" rx="3.8" ry="2.1" transform="rotate(177 160.8 240.0)"/><ellipse cx="162.7" cy="239.3" rx="2.1" ry="1.8" transform="rotate(173 160.8 240.0)"/><ellipse cx="155.0" cy="242.5" rx="3.5" ry="2.2" transform="rotate(164 160.8 240.0)"/><ellipse cx="20.5" cy="256.3" rx="3.4" ry="2.0" transform="rotate(60 20.0 256.7)"/><ellipse cx="20.9" cy="255.4" rx="2.4" ry="2.3" transform="rotate(49 20.0 256.7)"/><ellipse cx="21.9" cy="254.9" rx="2.7" ry="2.5" transform="rotate(161 20.0 256.7)"/><ellipse cx="26.9" cy="253.0" rx="4.4" ry="3.3" transform="rotate(120 20.0 256.7)"/><ellipse cx="23.0" cy="252.0" rx="4.4" ry="3.2" transform="rotate(59 20.0 256.7)"/><ellipse cx="31.4" cy="251.9" rx="3.7" ry="2.0" transform="rotate(43 32.0 250.3)"/><ellipse cx="32.1" cy="250.4" rx="2.3" ry="2.2" transform="rotate(88 32.0 250.3)"/><ellipse cx="37.5" cy="249.5" rx="2.1" ry="1.2" transform="rotate(164 32.0 250.3)"/><ellipse cx="28.3" cy="246.1" rx="4.1" ry="2.2" transform="rotate(151 32.0 250.3)"/><ellipse cx="32.1" cy="248.7" rx="4.7" ry="3.6" transform="rotate(170 32.0 250.3)"/><ellipse cx="48.9" cy="235.8" rx="4.6" ry="2.6" transform="rotate(52 44.0 241.2)"/><ellipse cx="44.1" cy="241.4" rx="4.7" ry="4.5" transform="rotate(162 44.0 241.2)"/><ellipse cx="49.1" cy="244.3" rx="3.8" ry="2.8" transform="rotate(33 44.0 241.2)"/><ellipse cx="48.9" cy="244.7" rx="2.6" ry="1.7" transform="rotate(108 44.0 241.2)"/><ellipse cx="43.8" cy="244.0" rx="4.6" ry="2.4" transform="rotate(94 44.0 241.2)"/><ellipse cx="56.6" cy="251.6" rx="3.3" ry="2.1" transform="rotate(7 56.0 256.4)"/><ellipse cx="56.1" cy="256.1" rx="3.5" ry="1.9" transform="rotate(120 56.0 256.4)"/><ellipse cx="54.8" cy="252.3" rx="2.6" ry="2.4" transform="rotate(23 56.0 256.4)"/><ellipse cx="54.0" cy="255.3" rx="3.2" ry="2.5" transform="rotate(73 56.0 256.4)"/><ellipse cx="56.6" cy="248.6" rx="2.0" ry="1.5" transform="rotate(125 56.0 256.4)"/><ellipse cx="71.5" cy="245.6" rx="3.7" ry="3.6" transform="rotate(131 68.0 252.5)"/><ellipse cx="67.5" cy="260.0" rx="2.8" ry="1.7" transform="rotate(179 68.0 252.5)"/><ellipse cx="68.2" cy="253.8" rx="4.6" ry="4.1" transform="rotate(125 68.0 252.5)"/><ellipse cx="69.3" cy="247.1" rx="4.2" ry="3.4" transform="rotate(91 68.0 252.5)"/><ellipse cx="74.1" cy="256.7" rx="4.5" ry="3.9" transform="rotate(108 68.0 252.5)"/><ellipse cx="81.6" cy="256.3" rx="2.7" ry="2.6" transform="rotate(128 80.0 256.0)"/><ellipse cx="83.7" cy="262.9" rx="3.8" ry="3.7" transform="rotate(32 80.0 256.0)"/><ellipse cx="74.1" cy="254.8" rx="4.1" ry="3.4" transform="rotate(89 80.0 256.0)"/><ellipse cx="76.4" cy="253.9" rx="4.4" ry="3.2" transform="rotate(141 80.0 256.0)"/><ellipse cx="79.9" cy="254.6" rx="3.2" ry="2.9" transform="rotate(148 80.0 256.0)"/><ellipse cx="89.4" cy="248.6" rx="4.0" ry="3.0" transform="rotate(68 92.0 244.2)"/><ellipse cx="90.2" cy="249.5" rx="4.4" ry="2.5" transform="rotate(39 92.0 244.2)"/><ellipse cx="97.7" cy="243.2" rx="3.7" ry="2.5" transform="rotate(60 92.0 244.2)"/><ellipse cx="91.3" cy="245.5" rx="4.7" ry="4.1" transform="rotate(26 92.0 244.2)"/><ellipse cx="94.7" cy="248.7" rx="2.5" ry="1.5" transform="rotate(37 92.0 244.2)"/><ellipse cx="103.6" cy="250.8" rx="2.5" ry="2.1" transform="rotate(27 104.0 254.3)"/><ellipse cx="102.6" cy="261.3" rx="3.3" ry="1.7" transform="rotate(111 104.0 254.3)"/><ellipse cx="102.6" cy="250.6" rx="3.8" ry="2.8" transform="rotate(36 104.0 254.3)"/><ellipse cx="103.7" cy="260.2" rx="2.0" ry="1.3" transform="rotate(110 104.0 254.3)"/><ellipse cx="102.6" cy="249.8" rx="3.8" ry="3.5" transform="rotate(170 104.0 254.3)"/><ellipse cx="120.5" cy="248.8" rx="4.0" ry="3.7" transform="rotate(173 116.0 253.0)"/><ellipse cx="116.4" cy="253.9" rx="3.2" ry="2.0" transform="rotate(179 116.0 253.0)"/><ellipse cx="118.7" cy="254.9" rx="4.2" ry="3.6" transform="rotate(161 116.0 253.0)"/><ellipse cx="119.8" cy="258.7" rx="3.4" ry="1.7" transform="rotate(104 116.0 253.0)"/><ellipse cx="110.7" cy="252.4" rx="4.4" ry="4.2" transform="rotate(83 116.0 253.0)"/><ellipse cx="125.0" cy="256.5" rx="4.7" ry="2.5" transform="rotate(139 128.0 254.0)"/><ellipse cx="129.1" cy="259.6" rx="4.7" ry="2.8" transform="rotate(89 128.0 254.0)"/><ellipse cx="131.7" cy="256.7" rx="3.5" ry="3.0" transform="rotate(131 128.0 254.0)"/><ellipse cx="134.3" cy="254.6" rx="3.0" ry="2.0" transform="rotate(116 128.0 254.0)"/><ellipse cx="129.4" cy="259.3" rx="3.1" ry="2.7" transform="rotate(31 128.0 254.0)"/><ellipse cx="136.2" cy="249.8" rx="2.7" ry="1.9" transform="rotate(15 140.0 253.1)"/><ellipse cx="143.3" cy="253.4" rx="3.2" ry="2.7" transform="rotate(90 140.0 253.1)"/><ellipse cx="139.2" cy="252.7" rx="2.8" ry="2.0" transform="rotate(134 140.0 253.1)"/><ellipse cx="147.8" cy="251.7" rx="4.7" ry="3.4" transform="rotate(42 140.0 253.1)"/><ellipse cx="144.3" cy="257.6" rx="4.3" ry="3.5" transform="rotate(120 140.0 253.1)"/><ellipse cx="150.8" cy="245.2" rx="2.4" ry="2.0" transform="rotate(105 152.0 251.6)"/><ellipse cx="149.7" cy="252.0" rx="3.5" ry="2.0" transform="rotate(120 152.0 251.6)"/><ellipse cx="147.8" cy="256.9" rx="2.7" ry="1.9" transform="rotate(64 152.0 251.6)"/><ellipse cx="157.4" cy="251.0" rx="3.3" ry="3.0" transform="rotate(71 152.0 251.6)"/><ellipse cx="148.7" cy="255.6" rx="2.9" ry="2.2" transform="rotate(159 152.0 251.6)"/><ellipse cx="162.4" cy="249.0" rx="4.6" ry="4.3" transform="rotate(14 164.0 251.5)"/><ellipse cx="167.9" cy="253.8" rx="2.9" ry="2.8" transform="rotate(135 164.0 251.5)"/><ellipse cx="166.5" cy="247.1" rx="2.0" ry="1.0" transform="rotate(18 164.0 251.5)"/><ellipse cx="162.9" cy="249.8" rx="2.3" ry="1.3" transform="rotate(59 164.0 251.5)"/><ellipse cx="165.4" cy="254.8" rx="4.2" ry="2.5" transform="rotate(103 164.0 251.5)"/><ellipse cx="12.5" cy="123.9" rx="2.3" ry="2.1" transform="rotate(171 10.3 120.0)"/><ellipse cx="12.6" cy="118.4" rx="2.4" ry="1.5" transform="rotate(126 10.3 120.0)"/><ellipse cx="9.4" cy="117.5" rx="2.5" ry="1.8" transform="rotate(29 10.3 120.0)"/><ellipse cx="9.1" cy="119.6" rx="1.7" ry="0.9" transform="rotate(126 10.3 120.0)"/><ellipse cx="4.0" cy="138.4" rx="2.5" ry="1.5" transform="rotate(42 8.5 138.0)"/><ellipse cx="4.3" cy="136.9" rx="1.3" ry="1.2" transform="rotate(119 8.5 138.0)"/><ellipse cx="7.6" cy="135.7" rx="1.8" ry="1.3" transform="rotate(109 8.5 138.0)"/><ellipse cx="4.3" cy="140.3" rx="1.4" ry="1.1" transform="rotate(162 8.5 138.0)"/><ellipse cx="9.4" cy="156.0" rx="2.5" ry="2.5" transform="rotate(24 9.2 156.0)"/><ellipse cx="6.8" cy="155.8" rx="2.8" ry="1.5" transform="rotate(106 9.2 156.0)"/><ellipse cx="8.0" cy="154.8" rx="2.8" ry="1.9" transform="rotate(121 9.2 156.0)"/><ellipse cx="9.7" cy="153.3" rx="2.8" ry="1.8" transform="rotate(87 9.2 156.0)"/><ellipse cx="3.5" cy="172.6" rx="1.8" ry="1.6" transform="rotate(103 7.4 174.0)"/><ellipse cx="4.9" cy="178.3" rx="2.8" ry="1.9" transform="rotate(52 7.4 174.0)"/><ellipse cx="5.1" cy="170.7" rx="1.8" ry="1.2" transform="rotate(76 7.4 174.0)"/><ellipse cx="10.8" cy="177.5" rx="1.4" ry="1.4" transform="rotate(102 7.4 174.0)"/><ellipse cx="11.8" cy="190.2" rx="1.3" ry="0.9" transform="rotate(1 9.8 192.0)"/><ellipse cx="13.7" cy="193.2" rx="2.1" ry="1.8" transform="rotate(15 9.8 192.0)"/><ellipse cx="10.9" cy="187.6" rx="2.3" ry="1.9" transform="rotate(160 9.8 192.0)"/><ellipse cx="8.2" cy="188.9" rx="2.8" ry="1.5" transform="rotate(10 9.8 192.0)"/><ellipse cx="5.7" cy="211.0" rx="1.4" ry="0.8" transform="rotate(9 9.3 210.0)"/><ellipse cx="8.9" cy="210.2" rx="2.9" ry="1.5" transform="rotate(35 9.3 210.0)"/><ellipse cx="10.0" cy="207.3" rx="1.7" ry="1.1" transform="rotate(107 9.3 210.0)"/><ellipse cx="9.4" cy="210.0" rx="2.2" ry="1.8" transform="rotate(13 9.3 210.0)"/><ellipse cx="3.9" cy="227.4" rx="2.6" ry="1.9" transform="rotate(178 8.0 228.0)"/><ellipse cx="9.9" cy="226.9" rx="1.3" ry="0.9" transform="rotate(151 8.0 228.0)"/><ellipse cx="11.3" cy="227.9" rx="1.5" ry="1.3" transform="rotate(140 8.0 228.0)"/><ellipse cx="10.6" cy="229.9" rx="1.6" ry="0.9" transform="rotate(3 8.0 228.0)"/><ellipse cx="10.8" cy="246.2" rx="3.0" ry="2.8" transform="rotate(55 7.4 246.0)"/><ellipse cx="7.9" cy="245.5" rx="1.3" ry="1.1" transform="rotate(62 7.4 246.0)"/><ellipse cx="3.9" cy="247.1" rx="2.9" ry="2.0" transform="rotate(177 7.4 246.0)"/><ellipse cx="9.7" cy="243.1" rx="1.4" ry="1.1" transform="rotate(127 7.4 246.0)"/><ellipse cx="161.9" cy="130.1" rx="3.1" ry="3.0" transform="rotate(8 170.0 128.0)"/><ellipse cx="170.1" cy="128.0" rx="4.3" ry="3.9" transform="rotate(20 170.0 128.0)"/><ellipse cx="167.8" cy="129.8" rx="4.1" ry="4.1" transform="rotate(124 170.0 128.0)"/><ellipse cx="167.8" cy="126.2" rx="5.2" ry="4.5" transform="rotate(120 170.0 128.0)"/><ellipse cx="169.4" cy="126.8" rx="4.8" ry="3.2" transform="rotate(165 170.0 128.0)"/><ellipse cx="176.1" cy="152.9" rx="4.2" ry="3.7" transform="rotate(115 172.0 146.0)"/><ellipse cx="179.4" cy="143.3" rx="4.5" ry="2.9" transform="rotate(15 172.0 146.0)"/><ellipse cx="167.3" cy="141.5" rx="5.3" ry="4.2" transform="rotate(155 172.0 146.0)"/><ellipse cx="172.0" cy="145.8" rx="3.0" ry="2.8" transform="rotate(149 172.0 146.0)"/><ellipse cx="164.0" cy="149.9" rx="3.8" ry="3.2" transform="rotate(154 172.0 146.0)"/><ellipse cx="168.3" cy="162.9" rx="3.7" ry="3.1" transform="rotate(82 168.0 165.0)"/><ellipse cx="167.7" cy="168.8" rx="4.1" ry="3.7" transform="rotate(10 168.0 165.0)"/><ellipse cx="167.7" cy="166.2" rx="5.1" ry="5.0" transform="rotate(37 168.0 165.0)"/><ellipse cx="166.9" cy="172.6" rx="4.8" ry="4.0" transform="rotate(127 168.0 165.0)"/><ellipse cx="167.6" cy="165.6" rx="4.0" ry="3.6" transform="rotate(51 168.0 165.0)"/><ellipse cx="174.4" cy="180.4" rx="4.8" ry="3.1" transform="rotate(14 173.0 186.0)"/><ellipse cx="171.4" cy="182.7" rx="2.6" ry="1.6" transform="rotate(2 173.0 186.0)"/><ellipse cx="174.0" cy="182.4" rx="2.2" ry="2.0" transform="rotate(16 173.0 186.0)"/><ellipse cx="173.5" cy="190.6" rx="4.5" ry="4.3" transform="rotate(133 173.0 186.0)"/><ellipse cx="171.3" cy="189.7" rx="2.6" ry="1.6" transform="rotate(23 173.0 186.0)"/><ellipse cx="172.1" cy="104.4" rx="2.6" ry="2.1" transform="rotate(103 170.0 100.0)"/><ellipse cx="171.1" cy="94.1" rx="2.4" ry="2.3" transform="rotate(126 170.0 100.0)"/><ellipse cx="169.5" cy="100.5" rx="3.3" ry="2.9" transform="rotate(39 170.0 100.0)"/><ellipse cx="169.9" cy="100.2" rx="2.4" ry="2.0" transform="rotate(24 170.0 100.0)"/><ellipse cx="176.8" cy="101.5" rx="3.9" ry="2.9" transform="rotate(145 170.0 100.0)"/><ellipse cx="167.5" cy="66.3" rx="2.4" ry="1.3" transform="rotate(114 166.0 60.0)"/><ellipse cx="166.6" cy="54.3" rx="4.1" ry="2.6" transform="rotate(9 166.0 60.0)"/><ellipse cx="162.3" cy="65.9" rx="2.7" ry="1.4" transform="rotate(8 166.0 60.0)"/><ellipse cx="160.3" cy="57.8" rx="2.9" ry="2.8" transform="rotate(16 166.0 60.0)"/><ellipse cx="168.9" cy="56.6" rx="4.0" ry="3.4" transform="rotate(23 166.0 60.0)"/><ellipse cx="171.8" cy="218.9" rx="3.3" ry="3.2" transform="rotate(171 172.0 215.0)"/><ellipse cx="170.7" cy="214.9" rx="3.8" ry="2.6" transform="rotate(60 172.0 215.0)"/><ellipse cx="173.5" cy="214.9" rx="1.8" ry="1.2" transform="rotate(90 172.0 215.0)"/><ellipse cx="175.6" cy="216.4" rx="1.8" ry="1.7" transform="rotate(66 172.0 215.0)"/><ellipse cx="173.1" cy="210.2" rx="3.3" ry="3.3" transform="rotate(14 172.0 215.0)"/><ellipse cx="14.0" cy="41.5" rx="2.0" ry="1.2" transform="rotate(76 12.0 40.0)"/><ellipse cx="9.0" cy="38.1" rx="3.8" ry="2.8" transform="rotate(95 12.0 40.0)"/><ellipse cx="12.0" cy="41.0" rx="3.3" ry="2.0" transform="rotate(61 12.0 40.0)"/><ellipse cx="14.6" cy="33.2" rx="4.5" ry="3.3" transform="rotate(49 12.0 40.0)"/><ellipse cx="12.4" cy="38.8" rx="4.3" ry="2.3" transform="rotate(158 12.0 40.0)"/><ellipse cx="24.8" cy="64.7" rx="2.4" ry="1.7" transform="rotate(24 20.0 70.0)"/><ellipse cx="22.8" cy="68.6" rx="2.1" ry="1.1" transform="rotate(86 20.0 70.0)"/><ellipse cx="19.2" cy="71.7" rx="2.3" ry="1.6" transform="rotate(84 20.0 70.0)"/><ellipse cx="20.1" cy="70.4" rx="4.0" ry="3.1" transform="rotate(37 20.0 70.0)"/><ellipse cx="18.9" cy="70.4" rx="3.2" ry="2.0" transform="rotate(6 20.0 70.0)"/><ellipse cx="9.2" cy="100.8" rx="2.6" ry="1.5" transform="rotate(125 10.0 95.0)"/><ellipse cx="12.5" cy="97.0" rx="2.9" ry="1.7" transform="rotate(131 10.0 95.0)"/><ellipse cx="15.9" cy="97.2" rx="3.4" ry="2.1" transform="rotate(122 10.0 95.0)"/><ellipse cx="10.4" cy="94.3" rx="3.6" ry="3.5" transform="rotate(110 10.0 95.0)"/><ellipse cx="17.0" cy="94.6" rx="4.0" ry="2.2" transform="rotate(74 10.0 95.0)"/><ellipse cx="22.9" cy="20.7" rx="4.3" ry="4.3" transform="rotate(36 24.0 20.0)"/><ellipse cx="24.1" cy="20.0" rx="4.3" ry="2.9" transform="rotate(35 24.0 20.0)"/><ellipse cx="18.1" cy="22.2" rx="4.6" ry="3.0" transform="rotate(92 24.0 20.0)"/><ellipse cx="17.3" cy="22.9" rx="2.6" ry="2.1" transform="rotate(35 24.0 20.0)"/><ellipse cx="26.3" cy="16.5" rx="2.6" ry="1.6" transform="rotate(153 24.0 20.0)"/><ellipse cx="60.6" cy="14.3" rx="3.7" ry="2.8" transform="rotate(70 60.0 14.0)"/><ellipse cx="60.5" cy="15.0" rx="3.9" ry="3.2" transform="rotate(49 60.0 14.0)"/><ellipse cx="58.6" cy="13.2" rx="2.2" ry="1.9" transform="rotate(104 60.0 14.0)"/><ellipse cx="64.0" cy="7.8" rx="3.5" ry="2.3" transform="rotate(72 60.0 14.0)"/><ellipse cx="63.8" cy="8.2" rx="3.4" ry="1.7" transform="rotate(122 60.0 14.0)"/><ellipse cx="103.6" cy="20.0" rx="2.7" ry="2.1" transform="rotate(93 100.0 16.0)"/><ellipse cx="105.5" cy="17.3" rx="3.6" ry="3.4" transform="rotate(91 100.0 16.0)"/><ellipse cx="96.5" cy="15.6" rx="3.4" ry="1.9" transform="rotate(62 100.0 16.0)"/><ellipse cx="102.8" cy="9.7" rx="2.9" ry="2.5" transform="rotate(97 100.0 16.0)"/><ellipse cx="93.6" cy="12.7" rx="2.8" ry="1.6" transform="rotate(126 100.0 16.0)"/><ellipse cx="127.8" cy="20.1" rx="3.7" ry="2.1" transform="rotate(62 128.0 20.0)"/><ellipse cx="129.5" cy="19.7" rx="2.2" ry="1.2" transform="rotate(64 128.0 20.0)"/><ellipse cx="121.7" cy="17.7" rx="1.8" ry="1.7" transform="rotate(49 128.0 20.0)"/><ellipse cx="127.6" cy="25.8" rx="3.3" ry="2.4" transform="rotate(61 128.0 20.0)"/><ellipse cx="127.8" cy="19.3" rx="3.9" ry="3.3" transform="rotate(11 128.0 20.0)"/><ellipse cx="149.6" cy="24.8" rx="2.7" ry="2.4" transform="rotate(28 150.0 22.0)"/><ellipse cx="151.8" cy="23.7" rx="1.8" ry="1.4" transform="rotate(58 150.0 22.0)"/><ellipse cx="152.1" cy="24.7" rx="3.1" ry="1.8" transform="rotate(4 150.0 22.0)"/><ellipse cx="152.2" cy="21.1" rx="2.4" ry="2.2" transform="rotate(134 150.0 22.0)"/><ellipse cx="155.7" cy="23.3" rx="1.6" ry="1.1" transform="rotate(102 150.0 22.0)"/><ellipse cx="40.2" cy="254.7" rx="3.2" ry="3.2" transform="rotate(82 40.0 252.0)"/><ellipse cx="42.7" cy="245.8" rx="2.1" ry="1.6" transform="rotate(174 40.0 252.0)"/><ellipse cx="41.8" cy="251.2" rx="3.2" ry="2.6" transform="rotate(93 40.0 252.0)"/><ellipse cx="41.2" cy="252.9" rx="2.9" ry="1.7" transform="rotate(171 40.0 252.0)"/><ellipse cx="41.1" cy="252.1" rx="4.7" ry="4.2" transform="rotate(116 40.0 252.0)"/><ellipse cx="86.2" cy="249.8" rx="3.9" ry="3.7" transform="rotate(8 90.0 254.0)"/><ellipse cx="92.9" cy="250.8" rx="4.0" ry="3.2" transform="rotate(160 90.0 254.0)"/><ellipse cx="83.8" cy="252.3" rx="3.3" ry="2.0" transform="rotate(133 90.0 254.0)"/><ellipse cx="91.7" cy="254.1" rx="1.8" ry="1.0" transform="rotate(88 90.0 254.0)"/><ellipse cx="89.5" cy="253.3" rx="3.2" ry="3.1" transform="rotate(131 90.0 254.0)"/><ellipse cx="130.5" cy="249.7" rx="3.2" ry="3.1" transform="rotate(112 130.0 250.0)"/><ellipse cx="130.7" cy="250.6" rx="2.5" ry="1.7" transform="rotate(73 130.0 250.0)"/><ellipse cx="129.2" cy="255.1" rx="3.6" ry="2.3" transform="rotate(116 130.0 250.0)"/><ellipse cx="126.9" cy="247.5" rx="3.3" ry="2.0" transform="rotate(93 130.0 250.0)"/><ellipse cx="126.3" cy="250.9" rx="3.3" ry="2.4" transform="rotate(79 130.0 250.0)"/><ellipse cx="10.0" cy="150.4" rx="1.9" ry="1.5" transform="rotate(149 8.0 150.0)"/><ellipse cx="3.6" cy="153.4" rx="1.8" ry="1.8" transform="rotate(82 8.0 150.0)"/><ellipse cx="5.2" cy="149.0" rx="2.1" ry="2.1" transform="rotate(75 8.0 150.0)"/><ellipse cx="8.1" cy="150.0" rx="2.7" ry="2.1" transform="rotate(89 8.0 150.0)"/><ellipse cx="7.7" cy="150.1" rx="2.3" ry="1.7" transform="rotate(27 8.0 150.0)"/><ellipse cx="7.1" cy="209.1" rx="3.4" ry="3.3" transform="rotate(106 14.0 210.0)"/><ellipse cx="12.7" cy="212.1" rx="3.4" ry="2.8" transform="rotate(70 14.0 210.0)"/><ellipse cx="15.6" cy="206.7" rx="3.6" ry="3.1" transform="rotate(121 14.0 210.0)"/><ellipse cx="13.5" cy="214.4" rx="3.3" ry="2.8" transform="rotate(105 14.0 210.0)"/><ellipse cx="14.0" cy="210.0" rx="3.6" ry="2.9" transform="rotate(127 14.0 210.0)"/></g>
<g fill="none" stroke="#2a6fe0" stroke-width="1.1" opacity="0.9"><path d="M150 258q-22-20-30-48q22 12 30 48zM150 258q-4-28 8-52q10 26-8 52zM150 258q14-24 30-30q-4 20-30 30zM150 258q-30-6-44-22q26-2 44 22z"/><path d="M62 250q-8-14-2-22q8 8 2 22zM62 250q10-14 20-12q-4 12-20 12zM62 250q-14-6-16-16q12 2 16 16z"/></g>
</g></g>
<rect x="33.2" y="34.2" width="118.800" height="194" fill="none" stroke="#1660d6" stroke-width="5.800"/>
</svg>
<!--/WIDGET-->
<!--BARS--><svg id="bars" viewBox="0 0 120 170" style="position:absolute;left:1565px;top:170px;width:120px;height:170px;overflow:visible"><g transform="translate(89.3 20.5)"><rect x="0.500" y="0.500" width="9" height="9.200" fill="none" stroke="#d9503e" stroke-width="1"/><rect x="2.800" y="2.500" width="4.600" height="2.400" fill="none" stroke="#d9503e" stroke-width="0.800"/><path d="M2 7.800h6.200M3.200 6.500v2M5 6.500v2M6.800 6.500v2" stroke="#d9503e" stroke-width="0.800"/></g><g transform="translate(89.3 33.1)"><rect x="0.500" y="0.500" width="9" height="9.200" fill="none" stroke="#d9503e" stroke-width="1"/><rect x="2.800" y="2.500" width="4.600" height="2.400" fill="none" stroke="#d9503e" stroke-width="0.800"/><path d="M2 7.800h6.200M3.200 6.500v2M5 6.500v2M6.800 6.500v2" stroke="#d9503e" stroke-width="0.800"/></g><g transform="translate(89.3 45.7)"><rect x="0.500" y="0.500" width="9" height="9.200" fill="none" stroke="#d9503e" stroke-width="1"/><rect x="2.800" y="2.500" width="4.600" height="2.400" fill="none" stroke="#d9503e" stroke-width="0.800"/><path d="M2 7.800h6.200M3.200 6.500v2M5 6.500v2M6.800 6.500v2" stroke="#d9503e" stroke-width="0.800"/></g><g transform="translate(89.3 58.3)"><rect x="0.500" y="0.500" width="9" height="9.200" fill="none" stroke="#d9503e" stroke-width="1"/><rect x="2.800" y="2.500" width="4.600" height="2.400" fill="none" stroke="#d9503e" stroke-width="0.800"/><path d="M2 7.800h6.200M3.200 6.500v2M5 6.500v2M6.800 6.500v2" stroke="#d9503e" stroke-width="0.800"/></g><g transform="translate(89.3 70.9)"><rect x="0.500" y="0.500" width="9" height="9.200" fill="none" stroke="#d9503e" stroke-width="1"/><rect x="2.800" y="2.500" width="4.600" height="2.400" fill="none" stroke="#d9503e" stroke-width="0.800"/><path d="M2 7.800h6.200M3.200 6.500v2M5 6.500v2M6.800 6.500v2" stroke="#d9503e" stroke-width="0.800"/></g><g transform="translate(89.3 83.5)"><rect x="0.500" y="0.500" width="9" height="9.200" fill="none" stroke="#d9503e" stroke-width="1"/><rect x="2.800" y="2.500" width="4.600" height="2.400" fill="none" stroke="#d9503e" stroke-width="0.800"/><path d="M2 7.800h6.200M3.200 6.500v2M5 6.500v2M6.800 6.500v2" stroke="#d9503e" stroke-width="0.800"/></g><g transform="translate(89.3 96.1)"><rect x="0.500" y="0.500" width="9" height="9.200" fill="none" stroke="#d9503e" stroke-width="1"/><rect x="2.800" y="2.500" width="4.600" height="2.400" fill="none" stroke="#d9503e" stroke-width="0.800"/><path d="M2 7.800h6.200M3.200 6.500v2M5 6.500v2M6.800 6.500v2" stroke="#d9503e" stroke-width="0.800"/></g><g transform="translate(89.3 108.7)"><rect x="0.500" y="0.500" width="9" height="9.200" fill="none" stroke="#d9503e" stroke-width="1"/><rect x="2.800" y="2.500" width="4.600" height="2.400" fill="none" stroke="#d9503e" stroke-width="0.800"/><path d="M2 7.800h6.200M3.200 6.500v2M5 6.500v2M6.800 6.500v2" stroke="#d9503e" stroke-width="0.800"/></g><g transform="translate(89.3 121.3)"><rect x="0.500" y="0.500" width="9" height="9.200" fill="none" stroke="#d9503e" stroke-width="1"/><rect x="2.800" y="2.500" width="4.600" height="2.400" fill="none" stroke="#d9503e" stroke-width="0.800"/><path d="M2 7.800h6.200M3.200 6.500v2M5 6.500v2M6.800 6.500v2" stroke="#d9503e" stroke-width="0.800"/></g><g transform="translate(89.3 133.9)"><rect x="0.500" y="0.500" width="9" height="9.200" fill="none" stroke="#d9503e" stroke-width="1"/><rect x="2.800" y="2.500" width="4.600" height="2.400" fill="none" stroke="#d9503e" stroke-width="0.800"/><path d="M2 7.800h6.200M3.200 6.500v2M5 6.500v2M6.800 6.500v2" stroke="#d9503e" stroke-width="0.800"/></g><g transform="translate(22.800 109.1)"><rect x="0.500" y="0.500" width="8.500" height="8.500" rx="1" fill="none" stroke="#d9503e" stroke-width="1"/><path d="M3 3h1.400v1.400H3zM5.500 3h1.400v1.400H5.500zM3 5.500h1.400v1.400H3zM5.500 5.500h1.400v1.400H5.500z" fill="#d9503e"/></g><g transform="translate(22.800 121.3)"><rect x="0.500" y="0.500" width="8.500" height="8.500" rx="1" fill="none" stroke="#d9503e" stroke-width="1"/><path d="M3 3h1.400v1.400H3zM5.500 3h1.400v1.400H5.500zM3 5.500h1.400v1.400H3zM5.500 5.500h1.400v1.400H5.500z" fill="#d9503e"/></g><g transform="translate(22.800 133.9)"><rect x="0.500" y="0.500" width="8.500" height="8.500" rx="1" fill="none" stroke="#d9503e" stroke-width="1"/><path d="M3 3h1.400v1.400H3zM5.500 3h1.400v1.400H5.500zM3 5.500h1.400v1.400H3zM5.500 5.500h1.400v1.400H5.500z" fill="#d9503e"/></g><text x="93.500" y="15.200" font-family="'Liberation Sans',sans-serif" font-weight="700" font-size="9.2" fill="#fff" stroke="#5a6a80" stroke-width="1.600" paint-order="stroke" text-anchor="middle" letter-spacing="-0.400">58.62 %</text><text x="27.500" y="103" font-family="'Liberation Sans',sans-serif" font-weight="700" font-size="9.2" fill="#fff" stroke="#5a6a80" stroke-width="1.600" paint-order="stroke" text-anchor="middle" letter-spacing="-0.400">14.11 %</text><text x="60.800" y="135.200" font-family="'Liberation Sans',sans-serif" font-weight="700" font-size="9.2" fill="#fff" stroke="#5a6a80" stroke-width="1.600" paint-order="stroke" text-anchor="middle" letter-spacing="-0.400">0 %</text><text x="27.300" y="158.700" font-family="'Liberation Sans',sans-serif" font-size="9.600" fill="#f2f6ff" text-anchor="middle">CPU</text><text x="60.400" y="158.700" font-family="'Liberation Sans',sans-serif" font-size="9.600" fill="#f2f6ff" text-anchor="middle">GPU</text><text x="93.700" y="158.700" font-family="'Liberation Sans',sans-serif" font-size="9.600" fill="#f2f6ff" text-anchor="middle">RAM</text></svg><!--/BARS-->
<div id="win">
 <div id="side">
  <svg id="logo" viewBox="0 0 140 140">
<defs><clipPath id="lcL"><rect x="0" y="0" width="69.7" height="140"/></clipPath><clipPath id="lcR"><rect x="69.7" y="0" width="71" height="140"/></clipPath><clipPath id="lcC"><circle cx="70" cy="70" r="60"/></clipPath></defs>
<circle cx="70" cy="70" r="70" fill="#2c3d56"/>
<g clip-path="url(#lcC)"><rect x="0" y="0" width="69.7" height="140" fill="#7b1d8c"/><rect x="69.7" y="0" width="71" height="140" fill="#fbf85b"/></g>
<g font-family="'DejaVu Sans','Liberation Sans',sans-serif" font-weight="700" font-size="46.6" stroke-linejoin="miter">
<text x="37.6" y="63.8" text-anchor="middle" fill="#fbf85b" stroke="#fbf85b" stroke-width="2" transform="translate(37.6 0) scale(0.83 1) translate(-37.6 0)">M</text>
<text x="100.2" y="64.8" text-anchor="middle" fill="#7b1d8c" stroke="#7b1d8c" stroke-width="2" transform="translate(100.2 0) scale(0.89 1) translate(-100.2 0)">G</text>
</g>
<g font-family="'Liberation Serif',serif" font-weight="700" font-size="56" stroke-linejoin="round">
<text x="69.8" y="113" text-anchor="middle" fill="#fbf85b" stroke="#fbf85b" stroke-width="1.2" clip-path="url(#lcL)" transform="translate(69.8 0) scale(0.74 1) translate(-69.8 0)">2</text>
<text x="69.8" y="113" text-anchor="middle" fill="#7b1d8c" stroke="#7b1d8c" stroke-width="1.2" clip-path="url(#lcR)" transform="translate(69.8 0) scale(0.74 1) translate(-69.8 0)">2</text>
</g>
</svg>
  <div class="nav on" style="top:180px"><svg viewBox="0 0 24 24"><g fill="none" stroke="#fb5f1e" stroke-width="1.5"><polygon points="5.3,6.1 12.6,5.2 12.6,18.8 5.3,17.7"/><rect x="7.9" y="8.6" width="3.0" height="6.8" stroke-width="1.1"/></g><g fill="#fb5f1e"><rect x="14.3" y="5.0" width="1.9" height="1.9"/><rect x="14.3" y="8.0" width="1.9" height="1.9"/><rect x="14.3" y="10.9" width="1.9" height="1.9"/><rect x="14.3" y="13.8" width="1.9" height="1.9"/><rect x="14.3" y="16.8" width="1.9" height="1.9"/><rect x="17.3" y="5.0" width="1.9" height="1.9"/><rect x="17.3" y="8.0" width="1.9" height="1.9"/><rect x="17.3" y="10.9" width="1.9" height="1.9"/><rect x="17.3" y="13.8" width="1.9" height="1.9"/><rect x="17.3" y="16.8" width="1.9" height="1.9"/></g></svg><span>硬件检测</span></div>
  <div class="nav" style="top:240px"><svg viewBox="0 0 24 24"><polygon points="12.00,6.30 14.29,9.34 17.90,10.58 15.71,13.71 15.64,17.52 12.00,16.40 8.36,17.52 8.29,13.71 6.10,10.58 9.71,9.34" fill="#fb5f1e" stroke="#fb5f1e" stroke-width="2.3" stroke-linejoin="round"/></svg><span>创意工坊</span></div>
  <div class="nav" style="top:300px"><svg viewBox="0 0 24 24"><g fill="#fb5f1e"><circle cx="8.2" cy="13.6" r="4.4"/><circle cx="12.2" cy="10.6" r="4.6"/><circle cx="16.6" cy="13.4" r="4.1"/><rect x="8" y="13" width="9" height="5"/></g><path d="M12.2 11.2l3 3.4h-1.9v3.4h-2.2v-3.4H9.2z" fill="#282a33"/></svg><span>上传内容</span></div>
  <div class="nav" style="top:360px"><svg viewBox="0 0 24 24"><polygon points="16.79,11.15 18.63,11.20 18.63,13.20 16.79,13.25 16.13,14.84 17.39,16.18 15.98,17.59 14.64,16.33 13.05,16.99 13.00,18.83 11.00,18.83 10.95,16.99 9.36,16.33 8.02,17.59 6.61,16.18 7.87,14.84 7.21,13.25 5.37,13.20 5.37,11.20 7.21,11.15 7.87,9.56 6.61,8.22 8.02,6.81 9.36,8.07 10.95,7.41 11.00,5.57 13.00,5.57 13.05,7.41 14.64,8.07 15.98,6.81 17.39,8.22 16.13,9.56" fill="#fb5f1e" stroke="#fb5f1e" stroke-width="0.8" stroke-linejoin="round"/><circle cx="12" cy="12.2" r="2.9" fill="none" stroke="#282a33" stroke-width="0.9"/><circle cx="12" cy="12.2" r="1.2" fill="#282a33" opacity="0.55"/></svg><span>软件设置</span></div>
  <div class="nav" style="top:420px"><svg viewBox="0 0 24 24"><g fill="#fb5f1e"><ellipse cx="8.6" cy="8.6" rx="3.0" ry="3.7"/><ellipse cx="15.6" cy="8.6" rx="3.0" ry="3.7"/><path d="M2.2 19.6c0-3.2 2.6-5 6.4-5.6 1.2-.2 2.2.4 3.5.4s2.300-.6 3.500-.4c3.800.6 6.400 2.400 6.400 5.600z"/><rect x="7" y="10.500" width="3.200" height="5"/><rect x="14" y="10.500" width="3.200" height="5"/></g></svg><span style="left:67.500px">关于我们</span></div>
 </div>
 <div id="tbar"></div>
 <div id="gbar"></div>
 <svg id="close" viewBox="0 0 22 22"><path d="M2 2L20 20M20 2L2 20" stroke="#fff" stroke-width="2.2" fill="none"/></svg>
 <div id="main">
  <div id="list">
   <div class="row"><svg class="ic" viewBox="0 0 40 40"><rect x="6" y="9.7" width="20.9" height="15.2" rx="1.2" fill="#4b5661"/><rect x="7.2" y="10.8" width="18.6" height="10.3" fill="#5b9ce6"/><polygon points="17.5,10.800 22,10.800 18.500,21.100 14,21.100" fill="#78b0ee" opacity="0.6"/><rect x="15.9" y="22.200" width="1" height="1.700" fill="#c9d3dc"/><polygon points="13.800,24.900 19.300,24.900 20.200,27.300 12.900,27.300" fill="#434d57"/><rect x="11.900" y="27.100" width="9.200" height="1.500" rx="0.500" fill="#596571"/><rect x="29" y="9.700" width="9" height="18.200" rx="0.800" fill="#cfd4da"/><g stroke="#a9b0b9" stroke-width="0.9"><path d="M30.800 12.900h5.200M30.800 15.700h5.200M30.800 18.300h5.200"/></g><circle cx="33.400" cy="22.900" r="0.900" fill="#f0466e"/></svg><span class="tx">系统信息</span><svg class="ch" viewBox="0 0 10 16"><path d="M2.700 2.700l5.200 5.300L2.700 13.300" fill="none" stroke="#3c3c3c" stroke-width="1.300"/></svg></div>
   <div class="row"><svg class="ic" viewBox="0 0 40 40"><g fill="#b2e2ae"><circle cx="11.20" cy="6.9" r="0.95"/><circle cx="11.20" cy="31.9" r="0.95"/><circle cx="9.8" cy="8.30" r="0.95"/><circle cx="34.1" cy="8.30" r="0.95"/><circle cx="13.35" cy="6.9" r="0.95"/><circle cx="13.35" cy="31.9" r="0.95"/><circle cx="9.8" cy="10.45" r="0.95"/><circle cx="34.1" cy="10.45" r="0.95"/><circle cx="15.50" cy="6.9" r="0.95"/><circle cx="15.50" cy="31.9" r="0.95"/><circle cx="9.8" cy="12.60" r="0.95"/><circle cx="34.1" cy="12.60" r="0.95"/><circle cx="17.65" cy="6.9" r="0.95"/><circle cx="17.65" cy="31.9" r="0.95"/><circle cx="9.8" cy="14.75" r="0.95"/><circle cx="34.1" cy="14.75" r="0.95"/><circle cx="19.80" cy="6.9" r="0.95"/><circle cx="19.80" cy="31.9" r="0.95"/><circle cx="9.8" cy="16.90" r="0.95"/><circle cx="34.1" cy="16.90" r="0.95"/><circle cx="21.95" cy="6.9" r="0.95"/><circle cx="21.95" cy="31.9" r="0.95"/><circle cx="9.8" cy="19.05" r="0.95"/><circle cx="34.1" cy="19.05" r="0.95"/><circle cx="24.10" cy="6.9" r="0.95"/><circle cx="24.10" cy="31.9" r="0.95"/><circle cx="9.8" cy="21.20" r="0.95"/><circle cx="34.1" cy="21.20" r="0.95"/><circle cx="26.25" cy="6.9" r="0.95"/><circle cx="26.25" cy="31.9" r="0.95"/><circle cx="9.8" cy="23.35" r="0.95"/><circle cx="34.1" cy="23.35" r="0.95"/><circle cx="28.40" cy="6.9" r="0.95"/><circle cx="28.40" cy="31.9" r="0.95"/><circle cx="9.8" cy="25.50" r="0.95"/><circle cx="34.1" cy="25.50" r="0.95"/><circle cx="30.55" cy="6.9" r="0.95"/><circle cx="30.55" cy="31.9" r="0.95"/><circle cx="9.8" cy="27.65" r="0.95"/><circle cx="34.1" cy="27.65" r="0.95"/><circle cx="32.70" cy="6.9" r="0.95"/><circle cx="32.70" cy="31.9" r="0.95"/><circle cx="9.8" cy="29.80" r="0.95"/><circle cx="34.1" cy="29.80" r="0.95"/></g><rect x="9.800" y="6.900" width="24.300" height="25" rx="1.500" fill="#b2e2ae"/><rect x="10.900" y="8.200" width="22.200" height="22.500" fill="#f6fcf5"/><rect x="12.400" y="10.200" width="19.200" height="19" fill="#fdfefd" stroke="#72c670" stroke-width="0.900"/><text x="22" y="20.900" text-anchor="middle" font-family="'Liberation Mono','Liberation Sans',monospace" font-weight="700" font-size="7.600" fill="#5fbd5d" opacity="0.990" textLength="13.800" lengthAdjust="spacingAndGlyphs">CPU</text><rect x="19.200" y="24.900" width="5.600" height="0.800" fill="#72c670"/></svg><span class="tx">中央处理器</span><svg class="ch" viewBox="0 0 10 16"><path d="M2.700 2.700l5.200 5.300L2.700 13.300" fill="none" stroke="#3c3c3c" stroke-width="1.300"/></svg></div>
   <div class="row"><svg class="ic" viewBox="0 0 40 40"><rect x="13" y="9.300" width="12.600" height="1.300" fill="#b9bec4"/><rect x="13" y="30.200" width="12.600" height="1.300" fill="#b9bec4"/><rect x="28" y="11" width="4.500" height="1.800" fill="#8e949c"/><path d="M8.200 8.600l.9 1.300-.9 1.300-.9-1.300z" fill="#4d535d"/><rect x="10.400" y="6.300" width="1.400" height="1.400" fill="#8e949c"/><rect x="11.200" y="13" width="26.400" height="15.200" rx="1.800" fill="#f04a4a" stroke="#2b303b" stroke-width="1.100"/><path d="M11.600 15H6.400v2.500h2.300v1.600H6.400v2.400h2.300v1.600H6.400v2.700h5.200z" fill="#fff" stroke="#2b303b" stroke-width="1" stroke-linejoin="round"/><circle cx="19" cy="20.700" r="6.800" fill="#fff" stroke="#2b303b" stroke-width="0.900"/><path d="M19 20.700L24.25 21.44A5.300 5.300 0 0 1 23.25 23.87Z" fill="#2b303b"/><path d="M19 20.700L22.19 24.93A5.300 5.300 0 0 1 19.77 25.94Z" fill="#d24058"/><path d="M19 20.700L18.26 25.95A5.300 5.300 0 0 1 15.83 24.95Z" fill="#2b303b"/><path d="M19 20.700L14.77 23.89A5.300 5.300 0 0 1 13.76 21.47Z" fill="#d24058"/><path d="M19 20.700L13.75 19.96A5.300 5.300 0 0 1 14.75 17.53Z" fill="#2b303b"/><path d="M19 20.700L15.81 16.47A5.300 5.300 0 0 1 18.23 15.46Z" fill="#d24058"/><path d="M19 20.700L19.74 15.45A5.300 5.300 0 0 1 22.17 16.45Z" fill="#2b303b"/><path d="M19 20.700L23.23 17.51A5.300 5.300 0 0 1 24.24 19.93Z" fill="#d24058"/><path d="M13.200 20.700h11.600M19 14.900v11.600" stroke="#fff" stroke-width="0.900"/><circle cx="19" cy="20.700" r="1.400" fill="#fff"/><g fill="none" stroke="#2b303b" stroke-width="0.900"><path d="M33.700 16.200h3M30.500 19.300h6.500M35 22.200h2.300"/><circle cx="32.300" cy="16.300" r="1.200" fill="#ff8a3c"/><circle cx="33.400" cy="22.200" r="1.300" fill="#f04a4a"/><circle cx="29.300" cy="21.300" r="1.300" fill="#5b3040"/></g><circle cx="30.800" cy="28.300" r="3.700" fill="#f3d324" stroke="#2b303b" stroke-width="1" stroke-dasharray="2.400 1.100"/><path d="M30.100 26.400v3.300h2.300" fill="none" stroke="#2b303b" stroke-width="1.200"/></svg><span class="tx">显卡信息</span><svg class="ch" viewBox="0 0 10 16"><path d="M2.700 2.700l5.200 5.300L2.700 13.300" fill="none" stroke="#3c3c3c" stroke-width="1.300"/></svg></div>
   <div class="row"><svg class="ic" viewBox="0 0 40 40"><rect x="9.500" y="8.400" width="24.700" height="14.700" fill="#fdfaf8" stroke="#dfa27c" stroke-width="1.100"/><rect x="11.600" y="10" width="20.900" height="11.400" fill="#fff" stroke="#dfa27c" stroke-width="0.800"/><rect x="12.200" y="19.900" width="19.500" height="1.200" fill="#f4e3d8"/><rect x="12.200" y="10.500" width="19.500" height="1" fill="#f7ebe3"/><rect x="20.500" y="23.600" width="3.000" height="4.900" fill="#f0d3c0" stroke="#dfa27c" stroke-width="0.900"/><rect x="14.500" y="28.600" width="15.200" height="2.200" fill="#fff" stroke="#dfa27c" stroke-width="0.900"/><path d="M19 29.700h6" stroke="#e9c3aa" stroke-width="0.900"/></svg><span class="tx">显示器信息</span><svg class="ch" viewBox="0 0 10 16"><path d="M2.700 2.700l5.200 5.300L2.700 13.300" fill="none" stroke="#3c3c3c" stroke-width="1.300"/></svg></div>
   <div class="row"><svg class="ic" viewBox="0 0 40 40"><path d="M6.800 12.600h30.500v4l-1.300 1 1.300 1.300v10.200H6.800V18.900l1.300-1.300-1.300-1z" fill="#80dcc5" stroke="#6d6ea0" stroke-width="1.100" stroke-linejoin="round"/><path d="M7.600 13.700h28.900" stroke="#a5ecdb" stroke-width="0.900"/><g fill="#a39dbd" stroke="#6d6ea0" stroke-width="0.900"><rect x="10.200" y="16.600" width="4" height="6.300"/><rect x="16.600" y="16.600" width="4" height="6.300"/><rect x="23.200" y="16.600" width="4" height="6.300"/><rect x="29.600" y="16.600" width="4" height="6.300"/></g><g fill="#f7dc8e" stroke="#6d6ea0" stroke-width="0.800"><rect x="9.700" y="26.800" width="5.200" height="2.300"/><rect x="16.100" y="26.800" width="18.200" height="2.300"/></g></svg><span class="tx">内存信息</span><svg class="ch" viewBox="0 0 10 16"><path d="M2.700 2.700l5.200 5.300L2.700 13.300" fill="none" stroke="#3c3c3c" stroke-width="1.300"/></svg></div>
   <div class="row"><svg class="ic" viewBox="0 0 40 40"><rect x="6.800" y="6.600" width="30.500" height="25.600" rx="1.200" fill="#80dcc5" stroke="#6d6ea0" stroke-width="1.100"/><g fill="#f2e24a"><rect x="7.600" y="10" width="0.900" height="1.100"/><rect x="7.600" y="12.200" width="0.900" height="1.100"/><rect x="7.600" y="14.400" width="0.900" height="1.100"/><rect x="7.600" y="16.600" width="0.900" height="1.100"/><rect x="7.600" y="23" width="0.900" height="1.100"/><rect x="7.600" y="25.200" width="0.900" height="1.100"/><rect x="7.600" y="27.400" width="0.900" height="1.100"/></g><rect x="9.600" y="9.700" width="10" height="10.900" fill="#e9e2f6" stroke="#6d6ea0" stroke-width="0.900"/><path d="M12 9.700v10.900M14.600 9.700v10.900M17.200 9.700v10.900" stroke="#6d6ea0" stroke-width="1"/><path d="M9.600 12.600h10" stroke="#6d6ea0" stroke-width="0.700"/><path d="M24 10.400h1.600M24 10.400v1.600M33.500 10.400h-1.600M33.500 10.400v1.600M24 19.900h1.600M24 19.900v-1.600M33.500 19.900h-1.600M33.500 19.900v-1.600" stroke="#6d6ea0" stroke-width="0.900" fill="none"/><rect x="25.300" y="11.700" width="7" height="7" rx="1" fill="#f1eafa" stroke="#6d6ea0" stroke-width="1.500"/><rect x="27.600" y="14" width="2.400" height="2.400" fill="#9d95c2" stroke="#6d6ea0" stroke-width="0.700"/><g fill="#a59cd0" stroke="#6d6ea0" stroke-width="1"><rect x="9.900" y="23.400" width="3.100" height="4.200" rx="1.400"/><rect x="16.300" y="23.400" width="3.100" height="4.200" rx="1.400"/></g><rect x="23.700" y="23.600" width="10.800" height="4.200" fill="#f1eafa" stroke="#6d6ea0" stroke-width="0.900"/><path d="M23.700 25.700h10.800M31.200 23.600v4.200" stroke="#6d6ea0" stroke-width="0.800"/><rect x="9.700" y="30" width="6.500" height="1.900" fill="#a884c8" stroke="#6d6ea0" stroke-width="0.600"/><rect x="19.800" y="30" width="4.200" height="1.900" fill="#e9a35a" stroke="#6d6ea0" stroke-width="0.600"/><g fill="#f2d83a"><rect x="26.800" y="30" width="1.300" height="1.900"/><rect x="29.300" y="30" width="1.300" height="1.900"/><rect x="31.800" y="30" width="1.300" height="1.900"/><rect x="34.300" y="30" width="1.300" height="1.900"/></g></svg><span class="tx">主板信息</span><svg class="ch" viewBox="0 0 10 16"><path d="M2.700 2.700l5.200 5.300L2.700 13.300" fill="none" stroke="#3c3c3c" stroke-width="1.300"/></svg></div>
   <div class="row w"><svg class="ic" viewBox="0 0 40 40"><rect x="7.700" y="9.400" width="28.400" height="19.900" rx="2.200" fill="#cfcfe6" stroke="#8f90c2" stroke-width="1.200"/><path d="M12.200 11.600h8.200q.5 1.500 1.500 1.500t1.500-1.500h8.200q1.400 0 1.400 1.400v12.700q0 1.400-1.400 1.400h-8.200q-.5-1.500-1.500-1.500t-1.500 1.500h-8.200q-1.400 0-1.400-1.400V13q0-1.400 1.400-1.400z" fill="#e9e9f8" stroke="#8f90c2" stroke-width="0.900"/><circle cx="18" cy="19.300" r="5.200" fill="#e2e2f3" opacity="0.800"/><rect x="26.900" y="15.100" width="2.800" height="8.200" rx="0.900" fill="#a4cbea" stroke="#8f90c2" stroke-width="0.900"/></svg><span class="tx">硬盘信息</span><svg class="ch" viewBox="0 0 10 16"><path d="M2.700 2.700l5.200 5.300L2.700 13.300" fill="none" stroke="#3c3c3c" stroke-width="1.300"/></svg></div>
   <div class="row w"><svg class="ic" viewBox="0 0 40 40"><rect x="6.900" y="10.400" width="26.600" height="17" fill="#fcf8f5"/><rect x="6.900" y="10.400" width="3" height="17" fill="#ecd6c7"/><rect x="10.200" y="10.400" width="4.700" height="17" fill="#f7ece5"/><rect x="16" y="10.400" width="4.800" height="17" fill="#f7ece5"/><rect x="22" y="10.400" width="3" height="17" fill="#f8efe9"/><path d="M6.900 10.400h26.600M6.900 27.400h26.600" stroke="#c98b60" stroke-width="1.100"/><path d="M6.900 10.400v17M15.300 10.400v17M21.400 10.400v17M27.500 10.400v17M33.500 10.400v17" stroke="#c98b60" stroke-width="0.800" opacity="0.850"/><path d="M30.200 12.300l1.200 5.500" stroke="#ddb39a" stroke-width="1.300"/><path d="M29.200 24.600h3.200M30.800 23.200v2.800" stroke="#c98b60" stroke-width="0.800"/><rect x="33.900" y="14.400" width="2.700" height="9" fill="#f6ebe3" stroke="#c98b60" stroke-width="0.800"/><path d="M34 17h2.600M34 19.500h2.600M34 21.800h2.600" stroke="#e2bfa8" stroke-width="0.600"/></svg><span class="tx">电池信息</span><svg class="ch" viewBox="0 0 10 16"><path d="M2.700 2.700l5.200 5.300L2.700 13.300" fill="none" stroke="#3c3c3c" stroke-width="1.300"/></svg></div>
   <div class="row w"><svg class="ic" viewBox="0 0 40 40"><path d="M9 6.800l2.200-0.800v2.800h21.200q2.500 0 2.500 2.500v13.700q0 2.500-2.500 2.500h-1.600v1.600q0 .8-.8.800H15.700q-.8 0-.8-.8v-1.600h-3.700v3.300l-2.200.8z" fill="#1490dc"/><g fill="none" stroke="#fff" stroke-width="1.500" stroke-linecap="round"><path d="M16.900 16.300a7.200 7.200 0 0 1 10 0"/><path d="M19.200 19a3.900 3.900 0 0 1 5.400 0"/></g><circle cx="21.900" cy="20.800" r="1" fill="#fff"/><g fill="#fff"><rect x="16.900" y="24.200" width="1.500" height="2.800"/><rect x="20.300" y="24.200" width="1.500" height="2.800"/><rect x="23.600" y="24.200" width="1.500" height="2.800"/><rect x="27.100" y="24.200" width="1.500" height="2.800"/></g></svg><span class="tx">网络信息</span><svg class="ch" viewBox="0 0 10 16"><path d="M2.700 2.700l5.200 5.300L2.700 13.300" fill="none" stroke="#3c3c3c" stroke-width="1.300"/></svg></div>
   <div class="row w"><svg class="ic" viewBox="0 0 40 40"><circle cx="22.100" cy="18.900" r="13.900" fill="#ade1f6"/><path d="M26.7 10.100H21.700L19.500 10.900L17.300 12L15.600 13.400L14.600 14.900V15.700L11.400 16.300V21.700L14.600 22.300V23.100L15.600 24.600L17.300 26L19.500 27.100L21.700 27.900H26.700Z" fill="#fff" stroke="#1b7fa2" stroke-width="1" stroke-linejoin="round"/><path d="M14.600 15.700v6.600" stroke="#1b7fa2" stroke-width="0.800"/><g fill="none" stroke="#1b7fa2" stroke-width="0.950" stroke-linecap="round"><path d="M28.100 17.300a2.300 2.300 0 0 1 0 3.400"/><path d="M29.400 15.900a4.300 4.300 0 0 1 0 6.200"/><path d="M30.600 14.600a6.200 6.200 0 0 1 0 8.800"/></g></svg><span class="tx">声卡信息</span><svg class="ch" viewBox="0 0 10 16"><path d="M2.700 2.700l5.200 5.300L2.700 13.300" fill="none" stroke="#3c3c3c" stroke-width="1.300"/></svg></div>
  </div>
 </div>
</div>

<div id="task">
<!--TB--><div class="tb" style="left:0"><svg viewBox="0 0 24 24" style="left:12px;top:8px"><path d="M4 6.200l6.700-.9v6.300H4zM11.500 5.200L20 4v7.600h-8.500zM4 12.400h6.700v6.300L4 17.800zM11.500 12.400H20V20l-8.500-1.200z" fill="#fff"/></svg></div><div class="tb" style="left:51px;"><svg viewBox="0 0 24 24"><defs><linearGradient id="fg1" x1="0" y1="0" x2="0" y2="1"><stop offset="0" stop-color="#ffdf7c"/><stop offset="1" stop-color="#f7c640"/></linearGradient></defs><path d="M0.800 3q0-1.100 1.100-1.100h6.800q.6 0 1 .5l1.700 1.900H22.100q1.100 0 1.100 1.100V19q0 1.100-1.100 1.100H1.900q-1.100 0-1.100-1.100z" fill="#e9a800"/><path d="M0.800 6.400q3 0 5.500 0 1.500 0 2.600-1.200l1-1H22.100q1.100 0 1.100 1.100V19q0 1.100-1.100 1.100H1.900q-1.100 0-1.100-1.100z" fill="url(#fg1)"/><path d="M5 13q0-1 1-1h12q1 0 1 1v7.900h-3.400v-5.200H8.400v5.200H5z" fill="#3b9deb"/></svg><i class="ul" style="background:#76b9ed"></i></div><div class="tb" style="left:100px;"><svg viewBox="0 0 24 24"><defs><linearGradient id="rd1" x1="0" y1="0" x2="1" y2="0.200"><stop offset="0" stop-color="#0a1fd0"/><stop offset="0.450" stop-color="#0a28d8"/><stop offset="0.550" stop-color="#6f86ee"/><stop offset="1" stop-color="#b8c6fa"/></linearGradient></defs><polygon points="2.300,0 21.300,2.700 20.400,15.600 0.800,14.400" fill="#cfd3d8"/><polygon points="3.400,1.300 20.100,3.700 19.300,14.300 2.100,13.200" fill="url(#rd1)"/><polygon points="3.400,1.300 10.500,2.300 13.500,13.900 2.100,13.200" fill="#0a1ec8" opacity="0.850"/><polygon points="8,14.800 13,15.200 13.500,19 7.500,19" fill="#b4b8be"/><ellipse cx="9.900" cy="20.400" rx="5.300" ry="2.900" fill="#dcdfe3"/><circle cx="18.500" cy="18" r="5.300" fill="#cfd2d6"/><circle cx="18.500" cy="18" r="4.500" fill="#eef0f2"/><path d="M15.800 16l1.800 2-1.800 2M21.200 16l-1.800 2 1.800 2" stroke="#35a03c" stroke-width="1.150" fill="none"/></svg></div><div class="tb" style="left:149px;"><svg viewBox="0 0 24 24" style="overflow:visible"><g transform="translate(12 12) scale(1.100) translate(-12 -12)"><path d="M16.600 4.200L3.200 15.300M16.600 19.800L3.200 8.700" stroke="#0b80d4" stroke-width="3.900" stroke-linecap="round" fill="none"/><polygon points="16.800,1.200 22.800,4 22.800,20 16.800,22.800" fill="#25a5f3"/><polygon points="16.800,7.800 16.800,16.200 11.600,12" fill="#101010"/></g></svg><i class="ul" style="background:#76b9ed"></i></div><div class="tb" style="left:198px;"><svg viewBox="0 0 24 24"><g transform="translate(12 12) scale(1.020) translate(-12 -12)"><path d="M12 7L21.798 7A11 11 0 0 0 2.771 6.015L7.670 14.500A5 5 0 0 1 12 7Z" fill="#e2402f"/><path d="M12 7L21.798 7A11 11 0 0 1 11.431 22.985L16.330 14.500A5 5 0 0 0 12 7Z" fill="#fcc934"/><path d="M16.330 14.500L11.431 22.985A11 11 0 0 1 2.771 6.015L7.670 14.500A5 5 0 0 0 16.330 14.500Z" fill="#229c4e"/><circle cx="12" cy="12" r="5.100" fill="#f1f3f4"/><circle cx="12" cy="12" r="4.050" fill="#4a8cf0"/></g></svg><i class="ul" style="background:#76b9ed"></i></div><div class="tb" style="left:247px;"><svg viewBox="0 0 24 24"><defs><linearGradient id="stg" x1="0" y1="0" x2="0" y2="1"><stop offset="0" stop-color="#111d45"/><stop offset="1" stop-color="#1a6da8"/></linearGradient></defs><circle cx="12" cy="12" r="11.200" fill="url(#stg)"/><circle cx="15.700" cy="9" r="3.600" fill="none" stroke="#fff" stroke-width="1.700"/><circle cx="15.700" cy="9" r="1.700" fill="#c9d4e2"/><path d="M0.900 11.500l7.200 3 4.200-3.600 2.400 2.400-3.800 3.700a3 3 0 0 1-5.800.5L1.200 15.500z" fill="#fff"/><circle cx="8" cy="16.300" r="2" fill="none" stroke="#1a4f86" stroke-width="0.800"/></svg><i class="ul" style="background:#76b9ed"></i></div><div class="tb" style="left:296px;"><svg viewBox="0 0 24 24"><defs><linearGradient id="edg1" x1="0" y1="0" x2="1" y2="1"><stop offset="0" stop-color="#2bc3d2"/><stop offset="0.550" stop-color="#35c47d"/><stop offset="1" stop-color="#6bd045"/></linearGradient><linearGradient id="edg2" x1="0" y1="0" x2="0" y2="1"><stop offset="0" stop-color="#1b9de2"/><stop offset="1" stop-color="#1358b0"/></linearGradient></defs><path d="M1.200 11.500C1.800 5 6.500 1 12.300 1c6 0 10.700 4.400 10.700 9 0 3.300-2.500 5.300-5.300 5.300-2.600 0-3.600-1.200-3.600-2 0-.6.900-.9.900-2.300 0-1.900-1.800-3.600-4.400-3.600-4.100 0-6.900 3.500-6.900 7z" fill="url(#edg1)"/><path d="M1.200 11.500c-.5 6 4 11.500 10.300 11.500 2 0 3.700-.5 5-1.200-5 .6-9-3-9-7.600 0-3 1.700-5.200 3.800-6.500-5-.6-9.500 2-10.100 3.800z" fill="url(#edg2)"/><path d="M7.500 14.200c0 4.600 4 8.200 9 7.600 2.500-1.200 4.500-3.300 5.500-5.600-1.400 1.200-3 1.900-4.900 1.900-3.800 0-6.300-2.500-6.300-5.500 0-1.400.6-2.700 1.500-3.500-2.600.6-4.800 2.500-4.800 5.100z" fill="#1668c0"/></svg><i class="ul" style="background:#76b9ed"></i></div><div class="tb" style="left:345px;"><svg viewBox="0 0 24 24"><defs><linearGradient id="bag" x1="0" y1="0" x2="0" y2="1"><stop offset="0" stop-color="#1f8bff"/><stop offset="1" stop-color="#0c62e6"/></linearGradient></defs><rect x="1" y="1" width="22" height="22" rx="3" fill="url(#bag)"/><path d="M3 16l4.700-6.600 2.900 4-1.900 2.600z" fill="#cfe0ff"/><path d="M9 16l5.600-8.300 6.500 8.300h-3.600l-2.900-3.600-2.600 3.600z" fill="#fff"/></svg><i class="ul" style="background:#76b9ed;box-shadow:inset -8px 0 0 #4f86b6"></i></div><div class="tb" style="left:394px;background:#9b5519"><svg viewBox="0 0 24 24"><ellipse cx="9.200" cy="9.500" rx="8" ry="6.800" fill="#2dc35a"/><path d="M4.500 14.500l-.8 3.300 3.600-1.900z" fill="#2dc35a"/><circle cx="6.600" cy="7.600" r="1" fill="#178a3a"/><circle cx="11.800" cy="7.600" r="1" fill="#178a3a"/><ellipse cx="16.400" cy="15.200" rx="6.600" ry="5.600" fill="#e6e6e6"/><path d="M19.800 19.500l1.100 2.700-3.300-1.700z" fill="#e6e6e6"/><circle cx="14.300" cy="13.600" r="0.900" fill="#9a9a9a"/><circle cx="18.600" cy="13.600" r="0.900" fill="#9a9a9a"/></svg><i class="ul" style="left:0;right:0;height:2px;background:#ff7d10"></i></div><div class="tb" style="left:443px;background:#353535"><svg viewBox="0 0 24 24"><rect x="0" y="0" width="11.500" height="24" fill="#6f2296"/><rect x="11.500" y="0" width="12.500" height="24" fill="#f4ef3e"/><g font-family="'DejaVu Sans','Liberation Sans',sans-serif" font-weight="700" font-size="8"><text x="5.800" y="10.600" text-anchor="middle" fill="#f4ef3e">M</text><text x="18.300" y="10.600" text-anchor="middle" fill="#6f2296">G</text><text x="11.800" y="20.500" text-anchor="middle" fill="#8a6a50" font-size="8.500">2</text></g></svg><i class="ul" style="left:0;right:0;background:#76b9ed"></i></div><!--/TB-->
 <div id="clock">8:59<br><span style="letter-spacing:0.700px;margin-right:-0.700px">2022/2/11</span></div>
</div>
</div>
</body>
</html>
